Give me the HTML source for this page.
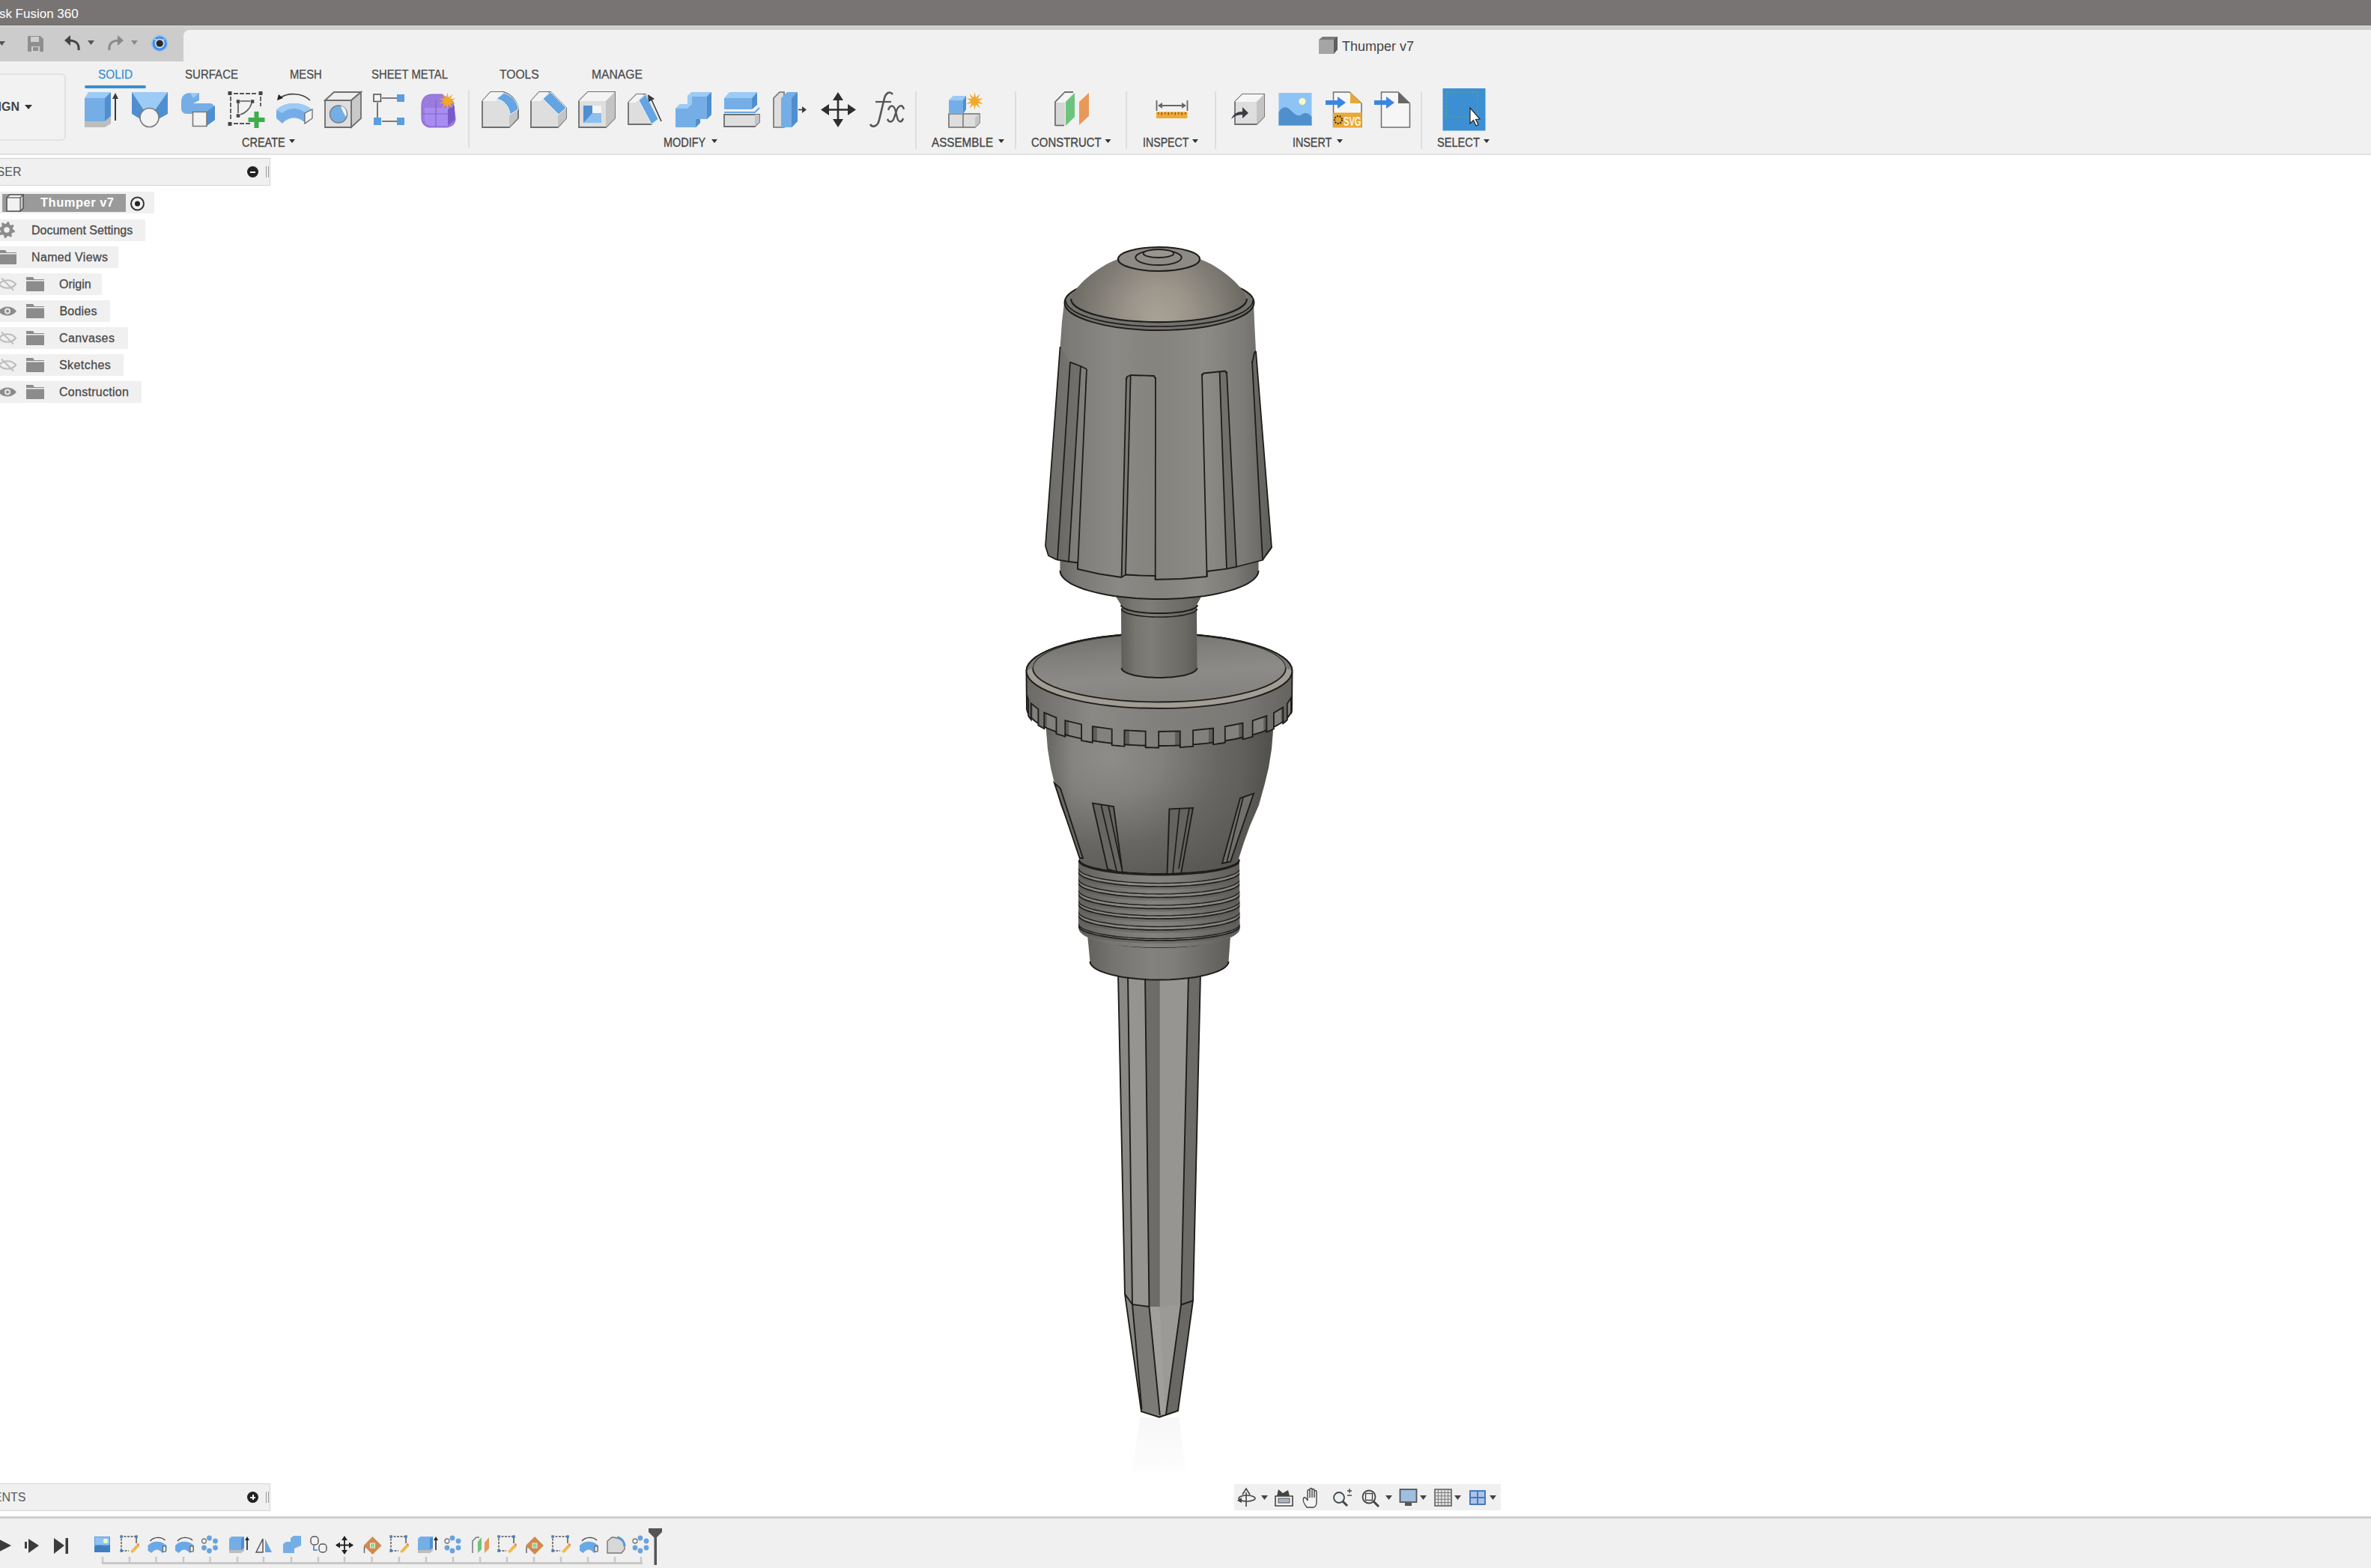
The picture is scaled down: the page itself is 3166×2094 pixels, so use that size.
<!DOCTYPE html>
<html><head><meta charset="utf-8">
<style>
html,body{margin:0;padding:0;width:3166px;height:2094px;overflow:hidden;background:#fff;font-family:"Liberation Sans",sans-serif;}
.a{position:absolute;}
#title{left:0;top:0;width:3166px;height:33px;background:#787473;border-bottom:1px solid #6e6e6e;}
#title span{position:absolute;left:-56px;top:6px;font-size:18px;color:#fff;white-space:nowrap;}
#strip{left:0;top:34px;width:3166px;height:6px;background:#cfcfcf;border-top:1px solid #d9d9d9;box-sizing:border-box;}
#tb{left:0;top:40px;width:3166px;height:165px;background:#f1f1f1;border-bottom:2px solid #e2e2e2;}
#qa{left:0;top:36px;width:245px;height:46px;background:#cccccc;border-radius:0 0 0 0;}
#qa2{left:245px;top:34px;width:20px;height:10px;background:#cfcfcf;}
.tab{position:absolute;top:91px;transform-origin:0 0;font-size:16px;color:#4a4a4a;letter-spacing:0px;white-space:nowrap;-webkit-text-stroke:0.25px #4a4a4a;}
.lbl{position:absolute;top:182px;font-size:16px;color:#444;white-space:nowrap;transform-origin:0 0;-webkit-text-stroke:0.3px #444;}
.sep{position:absolute;width:2px;background:#dedede;}
.row{position:absolute;left:0;height:29px;background:#f0f0f0;}
.rt{position:absolute;font-size:16px;color:#4a4a4a;white-space:nowrap;top:6px;-webkit-text-stroke:0.3px #4a4a4a;}
</style></head><body>
<div id="title" class="a"><span style="font-size:17px;left:-55px;top:8.5px">Autodesk Fusion 360</span></div>
<div id="strip" class="a"></div>
<div id="tb" class="a"></div>
<div id="qa" class="a"></div>
<div class="a" style="left:245px;top:40px;width:8px;height:8px;background:#cdcdcd"></div><div class="a" style="left:245px;top:40px;width:8px;height:8px;background:#f1f1f1;border-top-left-radius:8px"></div>

<!-- tabs -->
<div class="tab" style="left:131px;color:#3a8fd6;-webkit-text-stroke:0.25px #3a8fd6;transform:scaleX(0.96)">SOLID</div>
<div class="a" style="left:113px;top:114px;width:82px;height:4px;background:#3a8fd0;border-radius:2px"></div>
<div class="tab" style="left:246.5px;transform:scaleX(0.94)">SURFACE</div>
<div class="tab" style="left:386.5px;transform:scaleX(0.925)">MESH</div>
<div class="tab" style="left:495.5px;transform:scaleX(0.93)">SHEET METAL</div>
<div class="tab" style="left:666.5px;transform:scaleX(0.975)">TOOLS</div>
<div class="tab" style="left:790px;transform:scaleX(0.98)">MANAGE</div>

<!-- design button -->
<div class="a" style="left:-10px;top:98px;width:98px;height:90px;border:2px solid #e2e2e2;border-radius:6px;box-sizing:border-box;background:#f2f2f2"></div>
<div class="a" style="left:-2.5px;top:134px;font-size:16px;font-weight:bold;color:#444">IGN</div>

<!-- labels -->
<div class="lbl" style="left:323px;transform:scaleX(0.906)">CREATE</div>
<div class="lbl" style="left:886px;transform:scaleX(0.902)">MODIFY</div>
<div class="lbl" style="left:1244px;transform:scaleX(0.951)">ASSEMBLE</div>
<div class="lbl" style="left:1377px;transform:scaleX(0.933)">CONSTRUCT</div>
<div class="lbl" style="left:1526px;transform:scaleX(0.887)">INSPECT</div>
<div class="lbl" style="left:1726px;transform:scaleX(0.895)">INSERT</div>
<div class="lbl" style="left:1919px;transform:scaleX(0.913)">SELECT</div>

<div class="sep" style="left:625px;top:121px;height:76px"></div>
<div class="sep" style="left:1222px;top:122px;height:77px"></div>
<div class="sep" style="left:1355px;top:122px;height:77px"></div>
<div class="sep" style="left:1503px;top:122px;height:77px"></div>
<div class="sep" style="left:1622px;top:122px;height:77px"></div>
<div class="sep" style="left:1897px;top:122px;height:77px"></div>

<!-- doc title -->
<div class="a" style="left:1792px;top:51.5px;font-size:18px;color:#444">Thumper v7</div>

<!-- browser -->
<div class="a" style="left:-2px;top:211px;width:363px;height:37px;background:#f0f0f0;border:1px solid #d4d4d4;box-sizing:border-box"></div>
<div class="a" style="left:-4.4px;top:221.3px;font-size:16px;color:#555">SER</div>
<div class="a" style="left:330px;top:222px;width:15px;height:15px;border-radius:50%;background:#222"></div>
<div class="a" style="left:334px;top:229px;width:7px;height:2px;background:#fff"></div>
<div class="a" style="left:355px;top:222px;width:1px;height:15px;background:#999"></div>
<div class="a" style="left:358px;top:222px;width:1px;height:15px;background:#999"></div>

<div class="row" style="top:256px;width:206px"></div>
<div class="a" style="left:3px;top:259px;width:165px;height:24px;background:#9a9a9a"></div>
<div class="a" style="left:54px;top:261px;font-size:16.5px;font-weight:bold;color:#fff;letter-spacing:0.5px">Thumper v7</div>

<div class="row" style="top:293px;width:194px"><span class="rt" style="left:42px">Document Settings</span></div>
<div class="row" style="top:329px;width:158px"><span class="rt" style="left:42px;letter-spacing:0.35px">Named Views</span></div>
<div class="row" style="top:365px;width:136px"><span class="rt" style="left:79px">Origin</span></div>
<div class="row" style="top:401px;width:147px"><span class="rt" style="left:79.4px;letter-spacing:0.24px">Bodies</span></div>
<div class="row" style="top:437px;width:171px"><span class="rt" style="left:79px;letter-spacing:0.39px">Canvases</span></div>
<div class="row" style="top:473px;width:165px"><span class="rt" style="left:79px;letter-spacing:0.43px">Sketches</span></div>
<div class="row" style="top:509px;width:189px"><span class="rt" style="left:79px;letter-spacing:0.27px">Construction</span></div>

<!-- comments -->
<div class="a" style="left:-2px;top:1981px;width:363px;height:37px;background:#f0f0f0;border:1px solid #d4d4d4;box-sizing:border-box"></div>
<div class="a" style="left:-8.3px;top:1991.2px;font-size:16px;color:#5a5a5a">ENTS</div>
<div class="a" style="left:355px;top:1992px;width:1px;height:15px;background:#999"></div>
<div class="a" style="left:358px;top:1992px;width:1px;height:15px;background:#999"></div>
<div class="a" style="left:330px;top:1992px;width:15px;height:15px;border-radius:50%;background:#222"></div>
<div class="a" style="left:334px;top:1999px;width:7px;height:2px;background:#fff"></div>
<div class="a" style="left:336.5px;top:1996px;width:2px;height:7px;background:#fff"></div>

<!-- timeline -->
<div class="a" style="left:0;top:2025px;width:3166px;height:69px;background:#f0f0f0;border-top:3px solid #cfcfcf;box-sizing:border-box"></div>

<!-- navbar -->
<div class="a" style="left:1648px;top:1982px;width:356px;height:35px;background:#f0f0f0"></div>

<svg class="a" style="left:0;top:0" width="3166" height="2094" viewBox="0 0 3166 2094"><defs><linearGradient id="gCyl" x1="0" y1="0" x2="1" y2="0"><stop offset="0" stop-color="#5f5e5a"/><stop offset="0.12" stop-color="#7a7975"/><stop offset="0.35" stop-color="#8f8e8a"/><stop offset="0.55" stop-color="#84837f"/><stop offset="0.75" stop-color="#8c8b87"/><stop offset="0.9" stop-color="#777672"/><stop offset="1" stop-color="#5e5d59"/></linearGradient><linearGradient id="gKnob" x1="0" y1="0" x2="1" y2="0"><stop offset="0" stop-color="#6a6965"/><stop offset="0.1" stop-color="#7b7a76"/><stop offset="0.3" stop-color="#8a8985"/><stop offset="0.5" stop-color="#85837e"/><stop offset="0.7" stop-color="#8d8b86"/><stop offset="0.88" stop-color="#7b7a76"/><stop offset="1" stop-color="#62615d"/></linearGradient><linearGradient id="gDome" x1="0" y1="0" x2="1" y2="0"><stop offset="0" stop-color="#6d6b67"/><stop offset="0.2" stop-color="#84807a"/><stop offset="0.45" stop-color="#a29c92"/><stop offset="0.6" stop-color="#9d978d"/><stop offset="0.85" stop-color="#7d7a74"/><stop offset="1" stop-color="#64625e"/></linearGradient><linearGradient id="gCup" x1="0" y1="0" x2="1" y2="1"><stop offset="0" stop-color="#7d7c78"/><stop offset="0.25" stop-color="#8a8985"/><stop offset="0.5" stop-color="#6f6e6a"/><stop offset="0.75" stop-color="#5f5e5a"/><stop offset="1" stop-color="#6a6965"/></linearGradient><linearGradient id="gCupV" x1="0" y1="0" x2="0" y2="1"><stop offset="0" stop-color="#8a8985"/><stop offset="0.35" stop-color="#7c7b77"/><stop offset="0.7" stop-color="#62615d"/><stop offset="1" stop-color="#5a5955"/></linearGradient><linearGradient id="gThread" x1="0" y1="0" x2="1" y2="0"><stop offset="0" stop-color="#62615d"/><stop offset="0.2" stop-color="#767571"/><stop offset="0.45" stop-color="#83827e"/><stop offset="0.6" stop-color="#7f7e7a"/><stop offset="0.8" stop-color="#6e6d69"/><stop offset="1" stop-color="#5e5d59"/></linearGradient><linearGradient id="gDisc" x1="0" y1="0" x2="0" y2="1"><stop offset="0" stop-color="#5a5955"/><stop offset="0.3" stop-color="#73726e"/><stop offset="0.6" stop-color="#7f7e7a"/><stop offset="1" stop-color="#8b8a86"/></linearGradient><linearGradient id="gDiscSide" x1="0" y1="0" x2="1" y2="0"><stop offset="0" stop-color="#6b6a66"/><stop offset="0.25" stop-color="#8a8985"/><stop offset="0.5" stop-color="#81807c"/><stop offset="0.8" stop-color="#7a7975"/><stop offset="1" stop-color="#64635f"/></linearGradient><linearGradient id="gNeck" x1="0" y1="0" x2="1" y2="0"><stop offset="0" stop-color="#5f5e5a"/><stop offset="0.2" stop-color="#77766f"/><stop offset="0.4" stop-color="#7f7d77"/><stop offset="0.6" stop-color="#74736e"/><stop offset="0.85" stop-color="#6a6964"/><stop offset="1" stop-color="#5c5b57"/></linearGradient><linearGradient id="gRefl" x1="0" y1="0" x2="0" y2="1"><stop offset="0" stop-color="#f7f7f7"/><stop offset="1" stop-color="#fdfdfd"/></linearGradient><clipPath id="cThr"><path d="M1440,1149 L1440,1240 L1440.5,1240 L1440.8,1242 L1441.8,1244.1 L1443.5,1246.1 L1445.8,1248 L1448.7,1249.9 L1452.2,1251.8 L1456.3,1253.6 L1461,1255.3 L1466.3,1256.9 L1472,1258.4 L1478.2,1259.8 L1484.8,1261 L1491.8,1262.2 L1499.2,1263.2 L1506.9,1264 L1514.8,1264.7 L1522.9,1265.3 L1531.2,1265.7 L1539.6,1265.9 L1548,1266 L1556.4,1265.9 L1564.8,1265.7 L1573.1,1265.3 L1581.2,1264.7 L1589.1,1264 L1596.8,1263.2 L1604.2,1262.2 L1611.2,1261 L1617.8,1259.8 L1624,1258.4 L1629.7,1256.9 L1635,1255.3 L1639.7,1253.6 L1643.8,1251.8 L1647.3,1249.9 L1650.2,1248 L1652.5,1246.1 L1654.2,1244.1 L1655.2,1242 L1655.5,1240 L1655,1149 Z"/></clipPath><radialGradient id="gCupR" gradientUnits="userSpaceOnUse" cx="1480" cy="1010" r="230" gradientTransform="translate(1480 1010) scale(1 0.8) translate(-1480 -1010)"><stop offset="0" stop-color="#8e8d89"/><stop offset="0.3" stop-color="#82817d"/><stop offset="0.65" stop-color="#676662"/><stop offset="1" stop-color="#585753"/></radialGradient><linearGradient id="gCupEdge" x1="0" y1="0" x2="1" y2="0"><stop offset="0" stop-color="#000000"/><stop offset="0.06" stop-color="#000000"/><stop offset="0.2" stop-color="#000000"/><stop offset="0.8" stop-color="#000000"/><stop offset="1" stop-color="#000000"/></linearGradient><linearGradient id="gCupEdgeL" x1="0" y1="0" x2="1" y2="0"><stop offset="0" stop-color="#3a3936" stop-opacity="0.35"/><stop offset="0.12" stop-color="#3a3936" stop-opacity="0"/><stop offset="0.85" stop-color="#3a3936" stop-opacity="0"/><stop offset="1" stop-color="#3a3936" stop-opacity="0.3"/></linearGradient><linearGradient id="gDiscTop" x1="0" y1="0" x2="0.3" y2="1"><stop offset="0" stop-color="#6b6a66"/><stop offset="0.35" stop-color="#807f7b"/><stop offset="0.7" stop-color="#8c8b87"/><stop offset="1" stop-color="#858480"/></linearGradient><radialGradient id="gDomeR" cx="1548" cy="425" r="150" gradientUnits="userSpaceOnUse" gradientTransform="translate(1548 425) scale(0.9 0.75) translate(-1548 -425)"><stop offset="0" stop-color="#aba498"/><stop offset="0.35" stop-color="#9c968b"/><stop offset="0.7" stop-color="#7e7a73"/><stop offset="1" stop-color="#66635e"/></radialGradient></defs><path d="M1522,1893 L1574,1893 L1584,1965 L1512,1965 Z" fill="url(#gRefl)"/><path d="M1493,1300 L1502,1728 L1524,1885 L1548,1892.5 L1573,1884 L1593,1737 L1603,1300 Z" fill="#898884"/><path d="M1506,1300 L1512,1742 L1534.5,1745 L1529,1300 Z" fill="#959490"/><path d="M1529,1300 L1534.5,1745 L1548.8,1889.8 L1548.8,1300 Z" fill="#6d6c68"/><path d="M1548.8,1300 L1548.8,1889.8 L1577,1742.5 L1587,1300 Z" fill="#969591"/><path d="M1587,1300 L1577,1742.5 L1593,1737 L1603,1300 Z" fill="#6c6b67"/><path d="M1512,1742 L1534.5,1745 L1548.8,1889.8 L1524.6,1884 Z" fill="#7b7a76"/><path d="M1534.5,1745 L1548.8,1745 L1556.8,1889.8 L1548.8,1889.8 Z" fill="#a09f9b"/><path d="M1577,1742.5 L1593,1737 L1573,1884 L1556.8,1889.8 Z" fill="#696864"/><path d="M1548.8,1745 L1577,1742.5 L1556.8,1889.8 Z" fill="#9b9a96"/><path d="M1493,1300 L1502,1728 L1524,1885 L1548,1892.5 L1573,1884 L1593,1737 L1603,1300" fill="none" stroke="#1e1d1b" stroke-width="1.9" stroke-linejoin="round"/><path d="M1506,1300 L1512,1742 L1524.6,1882" fill="none" stroke="#1e1d1b" stroke-width="1.9" stroke-linejoin="round"/><path d="M1529,1300 L1534.5,1745 L1548.8,1889.8" fill="none" stroke="#1e1d1b" stroke-width="1.9" stroke-linejoin="round"/><path d="M1587,1300 L1577,1742.5 L1556.8,1889.8" fill="none" stroke="#1e1d1b" stroke-width="1.9" stroke-linejoin="round"/><path d="M1502,1728 L1512,1742 L1534.5,1745" fill="none" stroke="#1e1d1b" stroke-width="1.9" stroke-linejoin="round"/><path d="M1577,1742.5 L1593,1737" fill="none" stroke="#1e1d1b" stroke-width="1.9" stroke-linejoin="round"/><path d="M1451,1238 L1455.5,1284 L1455.8,1285.9 L1456.6,1287.8 L1458.1,1289.7 L1460,1291.6 L1462.5,1293.4 L1465.6,1295.1 L1469.1,1296.8 L1473.2,1298.4 L1477.7,1299.9 L1482.6,1301.3 L1487.9,1302.6 L1493.6,1303.8 L1499.7,1304.9 L1506,1305.8 L1512.6,1306.6 L1519.4,1307.3 L1526.4,1307.8 L1533.5,1308.2 L1540.7,1308.4 L1548,1308.5 L1555.3,1308.4 L1562.5,1308.2 L1569.6,1307.8 L1576.6,1307.3 L1583.4,1306.6 L1590,1305.8 L1596.3,1304.9 L1602.4,1303.8 L1608.1,1302.6 L1613.4,1301.3 L1618.3,1299.9 L1622.8,1298.4 L1626.9,1296.8 L1630.4,1295.1 L1633.5,1293.4 L1636,1291.6 L1637.9,1289.7 L1639.4,1287.8 L1640.2,1285.9 L1640.5,1284 L1644,1238 Z" fill="url(#gThread)"/><path d="M1455.5,1284 L1455.8,1285.9 L1456.6,1287.8 L1458.1,1289.7 L1460,1291.6 L1462.5,1293.4 L1465.6,1295.1 L1469.1,1296.8 L1473.2,1298.4 L1477.7,1299.9 L1482.6,1301.3 L1487.9,1302.6 L1493.6,1303.8 L1499.7,1304.9 L1506,1305.8 L1512.6,1306.6 L1519.4,1307.3 L1526.4,1307.8 L1533.5,1308.2 L1540.7,1308.4 L1548,1308.5 L1555.3,1308.4 L1562.5,1308.2 L1569.6,1307.8 L1576.6,1307.3 L1583.4,1306.6 L1590,1305.8 L1596.3,1304.9 L1602.4,1303.8 L1608.1,1302.6 L1613.4,1301.3 L1618.3,1299.9 L1622.8,1298.4 L1626.9,1296.8 L1630.4,1295.1 L1633.5,1293.4 L1636,1291.6 L1637.9,1289.7 L1639.4,1287.8 L1640.2,1285.9 L1640.5,1284" fill="none" stroke="#1e1d1b" stroke-width="2.0"/><path d="M1440,1149 L1440,1240 L1440.5,1240 L1440.8,1242 L1441.8,1244.1 L1443.5,1246.1 L1445.8,1248 L1448.7,1249.9 L1452.2,1251.8 L1456.3,1253.6 L1461,1255.3 L1466.3,1256.9 L1472,1258.4 L1478.2,1259.8 L1484.8,1261 L1491.8,1262.2 L1499.2,1263.2 L1506.9,1264 L1514.8,1264.7 L1522.9,1265.3 L1531.2,1265.7 L1539.6,1265.9 L1548,1266 L1556.4,1265.9 L1564.8,1265.7 L1573.1,1265.3 L1581.2,1264.7 L1589.1,1264 L1596.8,1263.2 L1604.2,1262.2 L1611.2,1261 L1617.8,1259.8 L1624,1258.4 L1629.7,1256.9 L1635,1255.3 L1639.7,1253.6 L1643.8,1251.8 L1647.3,1249.9 L1650.2,1248 L1652.5,1246.1 L1654.2,1244.1 L1655.2,1242 L1655.5,1240 L1655,1149 Z" fill="url(#gThread)"/><g clip-path="url(#cThr)"><path d="M1440,1159.6 L1440.3,1161.2 L1441.3,1162.7 L1443,1164.3 L1445.3,1165.8 L1448.2,1167.3 L1451.8,1168.7 L1455.9,1170 L1460.6,1171.4 L1465.9,1172.6 L1471.6,1173.7 L1477.9,1174.8 L1484.5,1175.8 L1491.6,1176.7 L1499,1177.4 L1506.7,1178.1 L1514.6,1178.6 L1522.8,1179 L1531.1,1179.4 L1539.5,1179.5 L1548,1179.6 L1556.5,1179.5 L1564.9,1179.4 L1573.2,1179 L1581.4,1178.6 L1589.3,1178.1 L1597,1177.4 L1604.4,1176.7 L1611.5,1175.8 L1618.1,1174.8 L1624.4,1173.7 L1630.1,1172.6 L1635.4,1171.4 L1640.1,1170 L1644.2,1168.7 L1647.8,1167.3 L1650.7,1165.8 L1653,1164.3 L1654.7,1162.7 L1655.7,1161.2 L1656,1159.6 L1656,1164 L1655.7,1165.6 L1654.7,1167.1 L1653,1168.7 L1650.7,1170.2 L1647.8,1171.7 L1644.2,1173.1 L1640.1,1174.4 L1635.4,1175.8 L1630.1,1177 L1624.4,1178.1 L1618.1,1179.2 L1611.5,1180.2 L1604.4,1181.1 L1597,1181.8 L1589.3,1182.5 L1581.4,1183 L1573.2,1183.4 L1564.9,1183.8 L1556.5,1183.9 L1548,1184 L1539.5,1183.9 L1531.1,1183.8 L1522.8,1183.4 L1514.6,1183 L1506.7,1182.5 L1499,1181.8 L1491.6,1181.1 L1484.5,1180.2 L1477.9,1179.2 L1471.6,1178.1 L1465.9,1177 L1460.6,1175.8 L1455.9,1174.4 L1451.8,1173.1 L1448.2,1171.7 L1445.3,1170.2 L1443,1168.7 L1441.3,1167.1 L1440.3,1165.6 L1440,1164 Z" fill="#8e8d89" opacity="0.8"/><path d="M1440,1164 L1440.3,1165.6 L1441.3,1167.1 L1443,1168.7 L1445.3,1170.2 L1448.2,1171.7 L1451.8,1173.1 L1455.9,1174.4 L1460.6,1175.8 L1465.9,1177 L1471.6,1178.1 L1477.9,1179.2 L1484.5,1180.2 L1491.6,1181.1 L1499,1181.8 L1506.7,1182.5 L1514.6,1183 L1522.8,1183.4 L1531.1,1183.8 L1539.5,1183.9 L1548,1184 L1556.5,1183.9 L1564.9,1183.8 L1573.2,1183.4 L1581.4,1183 L1589.3,1182.5 L1597,1181.8 L1604.4,1181.1 L1611.5,1180.2 L1618.1,1179.2 L1624.4,1178.1 L1630.1,1177 L1635.4,1175.8 L1640.1,1174.4 L1644.2,1173.1 L1647.8,1171.7 L1650.7,1170.2 L1653,1168.7 L1654.7,1167.1 L1655.7,1165.6 L1656,1164 L1656,1168 L1655.7,1169.6 L1654.7,1171.1 L1653,1172.7 L1650.7,1174.2 L1647.8,1175.7 L1644.2,1177.1 L1640.1,1178.4 L1635.4,1179.8 L1630.1,1181 L1624.4,1182.1 L1618.1,1183.2 L1611.5,1184.2 L1604.4,1185.1 L1597,1185.8 L1589.3,1186.5 L1581.4,1187 L1573.2,1187.4 L1564.9,1187.8 L1556.5,1187.9 L1548,1188 L1539.5,1187.9 L1531.1,1187.8 L1522.8,1187.4 L1514.6,1187 L1506.7,1186.5 L1499,1185.8 L1491.6,1185.1 L1484.5,1184.2 L1477.9,1183.2 L1471.6,1182.1 L1465.9,1181 L1460.6,1179.8 L1455.9,1178.4 L1451.8,1177.1 L1448.2,1175.7 L1445.3,1174.2 L1443,1172.7 L1441.3,1171.1 L1440.3,1169.6 L1440,1168 Z" fill="#5a5955" opacity="0.45"/><path d="M1440,1174 L1440.3,1175.6 L1441.3,1177.1 L1443,1178.7 L1445.3,1180.2 L1448.2,1181.7 L1451.8,1183.1 L1455.9,1184.4 L1460.6,1185.8 L1465.9,1187 L1471.6,1188.1 L1477.9,1189.2 L1484.5,1190.2 L1491.6,1191.1 L1499,1191.8 L1506.7,1192.5 L1514.6,1193 L1522.8,1193.4 L1531.1,1193.8 L1539.5,1193.9 L1548,1194 L1556.5,1193.9 L1564.9,1193.8 L1573.2,1193.4 L1581.4,1193 L1589.3,1192.5 L1597,1191.8 L1604.4,1191.1 L1611.5,1190.2 L1618.1,1189.2 L1624.4,1188.1 L1630.1,1187 L1635.4,1185.8 L1640.1,1184.4 L1644.2,1183.1 L1647.8,1181.7 L1650.7,1180.2 L1653,1178.7 L1654.7,1177.1 L1655.7,1175.6 L1656,1174 L1656,1178.5 L1655.7,1180.1 L1654.7,1181.6 L1653,1183.2 L1650.7,1184.7 L1647.8,1186.2 L1644.2,1187.6 L1640.1,1188.9 L1635.4,1190.3 L1630.1,1191.5 L1624.4,1192.6 L1618.1,1193.7 L1611.5,1194.7 L1604.4,1195.6 L1597,1196.3 L1589.3,1197 L1581.4,1197.5 L1573.2,1197.9 L1564.9,1198.3 L1556.5,1198.4 L1548,1198.5 L1539.5,1198.4 L1531.1,1198.3 L1522.8,1197.9 L1514.6,1197.5 L1506.7,1197 L1499,1196.3 L1491.6,1195.6 L1484.5,1194.7 L1477.9,1193.7 L1471.6,1192.6 L1465.9,1191.5 L1460.6,1190.3 L1455.9,1188.9 L1451.8,1187.6 L1448.2,1186.2 L1445.3,1184.7 L1443,1183.2 L1441.3,1181.6 L1440.3,1180.1 L1440,1178.5 Z" fill="#8e8d89" opacity="0.8"/><path d="M1440,1178.5 L1440.3,1180.1 L1441.3,1181.6 L1443,1183.2 L1445.3,1184.7 L1448.2,1186.2 L1451.8,1187.6 L1455.9,1188.9 L1460.6,1190.3 L1465.9,1191.5 L1471.6,1192.6 L1477.9,1193.7 L1484.5,1194.7 L1491.6,1195.6 L1499,1196.3 L1506.7,1197 L1514.6,1197.5 L1522.8,1197.9 L1531.1,1198.3 L1539.5,1198.4 L1548,1198.5 L1556.5,1198.4 L1564.9,1198.3 L1573.2,1197.9 L1581.4,1197.5 L1589.3,1197 L1597,1196.3 L1604.4,1195.6 L1611.5,1194.7 L1618.1,1193.7 L1624.4,1192.6 L1630.1,1191.5 L1635.4,1190.3 L1640.1,1188.9 L1644.2,1187.6 L1647.8,1186.2 L1650.7,1184.7 L1653,1183.2 L1654.7,1181.6 L1655.7,1180.1 L1656,1178.5 L1656,1182.5 L1655.7,1184.1 L1654.7,1185.6 L1653,1187.2 L1650.7,1188.7 L1647.8,1190.2 L1644.2,1191.6 L1640.1,1192.9 L1635.4,1194.3 L1630.1,1195.5 L1624.4,1196.6 L1618.1,1197.7 L1611.5,1198.7 L1604.4,1199.6 L1597,1200.3 L1589.3,1201 L1581.4,1201.5 L1573.2,1201.9 L1564.9,1202.3 L1556.5,1202.4 L1548,1202.5 L1539.5,1202.4 L1531.1,1202.3 L1522.8,1201.9 L1514.6,1201.5 L1506.7,1201 L1499,1200.3 L1491.6,1199.6 L1484.5,1198.7 L1477.9,1197.7 L1471.6,1196.6 L1465.9,1195.5 L1460.6,1194.3 L1455.9,1192.9 L1451.8,1191.6 L1448.2,1190.2 L1445.3,1188.7 L1443,1187.2 L1441.3,1185.6 L1440.3,1184.1 L1440,1182.5 Z" fill="#5a5955" opacity="0.45"/><path d="M1440,1189 L1440.3,1190.6 L1441.3,1192.1 L1443,1193.7 L1445.3,1195.2 L1448.2,1196.7 L1451.8,1198.1 L1455.9,1199.4 L1460.6,1200.8 L1465.9,1202 L1471.6,1203.1 L1477.9,1204.2 L1484.5,1205.2 L1491.6,1206.1 L1499,1206.8 L1506.7,1207.5 L1514.6,1208 L1522.8,1208.4 L1531.1,1208.8 L1539.5,1208.9 L1548,1209 L1556.5,1208.9 L1564.9,1208.8 L1573.2,1208.4 L1581.4,1208 L1589.3,1207.5 L1597,1206.8 L1604.4,1206.1 L1611.5,1205.2 L1618.1,1204.2 L1624.4,1203.1 L1630.1,1202 L1635.4,1200.8 L1640.1,1199.4 L1644.2,1198.1 L1647.8,1196.7 L1650.7,1195.2 L1653,1193.7 L1654.7,1192.1 L1655.7,1190.6 L1656,1189 L1656,1193.5 L1655.7,1195.1 L1654.7,1196.6 L1653,1198.2 L1650.7,1199.7 L1647.8,1201.2 L1644.2,1202.6 L1640.1,1203.9 L1635.4,1205.3 L1630.1,1206.5 L1624.4,1207.6 L1618.1,1208.7 L1611.5,1209.7 L1604.4,1210.6 L1597,1211.3 L1589.3,1212 L1581.4,1212.5 L1573.2,1212.9 L1564.9,1213.3 L1556.5,1213.4 L1548,1213.5 L1539.5,1213.4 L1531.1,1213.3 L1522.8,1212.9 L1514.6,1212.5 L1506.7,1212 L1499,1211.3 L1491.6,1210.6 L1484.5,1209.7 L1477.9,1208.7 L1471.6,1207.6 L1465.9,1206.5 L1460.6,1205.3 L1455.9,1203.9 L1451.8,1202.6 L1448.2,1201.2 L1445.3,1199.7 L1443,1198.2 L1441.3,1196.6 L1440.3,1195.1 L1440,1193.5 Z" fill="#8e8d89" opacity="0.8"/><path d="M1440,1193.5 L1440.3,1195.1 L1441.3,1196.6 L1443,1198.2 L1445.3,1199.7 L1448.2,1201.2 L1451.8,1202.6 L1455.9,1203.9 L1460.6,1205.3 L1465.9,1206.5 L1471.6,1207.6 L1477.9,1208.7 L1484.5,1209.7 L1491.6,1210.6 L1499,1211.3 L1506.7,1212 L1514.6,1212.5 L1522.8,1212.9 L1531.1,1213.3 L1539.5,1213.4 L1548,1213.5 L1556.5,1213.4 L1564.9,1213.3 L1573.2,1212.9 L1581.4,1212.5 L1589.3,1212 L1597,1211.3 L1604.4,1210.6 L1611.5,1209.7 L1618.1,1208.7 L1624.4,1207.6 L1630.1,1206.5 L1635.4,1205.3 L1640.1,1203.9 L1644.2,1202.6 L1647.8,1201.2 L1650.7,1199.7 L1653,1198.2 L1654.7,1196.6 L1655.7,1195.1 L1656,1193.5 L1656,1197.5 L1655.7,1199.1 L1654.7,1200.6 L1653,1202.2 L1650.7,1203.7 L1647.8,1205.2 L1644.2,1206.6 L1640.1,1207.9 L1635.4,1209.3 L1630.1,1210.5 L1624.4,1211.6 L1618.1,1212.7 L1611.5,1213.7 L1604.4,1214.6 L1597,1215.3 L1589.3,1216 L1581.4,1216.5 L1573.2,1216.9 L1564.9,1217.3 L1556.5,1217.4 L1548,1217.5 L1539.5,1217.4 L1531.1,1217.3 L1522.8,1216.9 L1514.6,1216.5 L1506.7,1216 L1499,1215.3 L1491.6,1214.6 L1484.5,1213.7 L1477.9,1212.7 L1471.6,1211.6 L1465.9,1210.5 L1460.6,1209.3 L1455.9,1207.9 L1451.8,1206.6 L1448.2,1205.2 L1445.3,1203.7 L1443,1202.2 L1441.3,1200.6 L1440.3,1199.1 L1440,1197.5 Z" fill="#5a5955" opacity="0.45"/><path d="M1440,1203 L1440.3,1204.6 L1441.3,1206.1 L1443,1207.7 L1445.3,1209.2 L1448.2,1210.7 L1451.8,1212.1 L1455.9,1213.4 L1460.6,1214.8 L1465.9,1216 L1471.6,1217.1 L1477.9,1218.2 L1484.5,1219.2 L1491.6,1220.1 L1499,1220.8 L1506.7,1221.5 L1514.6,1222 L1522.8,1222.4 L1531.1,1222.8 L1539.5,1222.9 L1548,1223 L1556.5,1222.9 L1564.9,1222.8 L1573.2,1222.4 L1581.4,1222 L1589.3,1221.5 L1597,1220.8 L1604.4,1220.1 L1611.5,1219.2 L1618.1,1218.2 L1624.4,1217.1 L1630.1,1216 L1635.4,1214.8 L1640.1,1213.4 L1644.2,1212.1 L1647.8,1210.7 L1650.7,1209.2 L1653,1207.7 L1654.7,1206.1 L1655.7,1204.6 L1656,1203 L1656,1207 L1655.7,1208.6 L1654.7,1210.1 L1653,1211.7 L1650.7,1213.2 L1647.8,1214.7 L1644.2,1216.1 L1640.1,1217.4 L1635.4,1218.8 L1630.1,1220 L1624.4,1221.1 L1618.1,1222.2 L1611.5,1223.2 L1604.4,1224.1 L1597,1224.8 L1589.3,1225.5 L1581.4,1226 L1573.2,1226.4 L1564.9,1226.8 L1556.5,1226.9 L1548,1227 L1539.5,1226.9 L1531.1,1226.8 L1522.8,1226.4 L1514.6,1226 L1506.7,1225.5 L1499,1224.8 L1491.6,1224.1 L1484.5,1223.2 L1477.9,1222.2 L1471.6,1221.1 L1465.9,1220 L1460.6,1218.8 L1455.9,1217.4 L1451.8,1216.1 L1448.2,1214.7 L1445.3,1213.2 L1443,1211.7 L1441.3,1210.1 L1440.3,1208.6 L1440,1207 Z" fill="#8e8d89" opacity="0.8"/><path d="M1440,1207 L1440.3,1208.6 L1441.3,1210.1 L1443,1211.7 L1445.3,1213.2 L1448.2,1214.7 L1451.8,1216.1 L1455.9,1217.4 L1460.6,1218.8 L1465.9,1220 L1471.6,1221.1 L1477.9,1222.2 L1484.5,1223.2 L1491.6,1224.1 L1499,1224.8 L1506.7,1225.5 L1514.6,1226 L1522.8,1226.4 L1531.1,1226.8 L1539.5,1226.9 L1548,1227 L1556.5,1226.9 L1564.9,1226.8 L1573.2,1226.4 L1581.4,1226 L1589.3,1225.5 L1597,1224.8 L1604.4,1224.1 L1611.5,1223.2 L1618.1,1222.2 L1624.4,1221.1 L1630.1,1220 L1635.4,1218.8 L1640.1,1217.4 L1644.2,1216.1 L1647.8,1214.7 L1650.7,1213.2 L1653,1211.7 L1654.7,1210.1 L1655.7,1208.6 L1656,1207 L1656,1211 L1655.7,1212.6 L1654.7,1214.1 L1653,1215.7 L1650.7,1217.2 L1647.8,1218.7 L1644.2,1220.1 L1640.1,1221.4 L1635.4,1222.8 L1630.1,1224 L1624.4,1225.1 L1618.1,1226.2 L1611.5,1227.2 L1604.4,1228.1 L1597,1228.8 L1589.3,1229.5 L1581.4,1230 L1573.2,1230.4 L1564.9,1230.8 L1556.5,1230.9 L1548,1231 L1539.5,1230.9 L1531.1,1230.8 L1522.8,1230.4 L1514.6,1230 L1506.7,1229.5 L1499,1228.8 L1491.6,1228.1 L1484.5,1227.2 L1477.9,1226.2 L1471.6,1225.1 L1465.9,1224 L1460.6,1222.8 L1455.9,1221.4 L1451.8,1220.1 L1448.2,1218.7 L1445.3,1217.2 L1443,1215.7 L1441.3,1214.1 L1440.3,1212.6 L1440,1211 Z" fill="#5a5955" opacity="0.45"/><path d="M1440,1217.6 L1440.3,1219.2 L1441.3,1220.7 L1443,1222.3 L1445.3,1223.8 L1448.2,1225.3 L1451.8,1226.7 L1455.9,1228 L1460.6,1229.4 L1465.9,1230.6 L1471.6,1231.7 L1477.9,1232.8 L1484.5,1233.8 L1491.6,1234.7 L1499,1235.4 L1506.7,1236.1 L1514.6,1236.6 L1522.8,1237 L1531.1,1237.4 L1539.5,1237.5 L1548,1237.6 L1556.5,1237.5 L1564.9,1237.4 L1573.2,1237 L1581.4,1236.6 L1589.3,1236.1 L1597,1235.4 L1604.4,1234.7 L1611.5,1233.8 L1618.1,1232.8 L1624.4,1231.7 L1630.1,1230.6 L1635.4,1229.4 L1640.1,1228 L1644.2,1226.7 L1647.8,1225.3 L1650.7,1223.8 L1653,1222.3 L1654.7,1220.7 L1655.7,1219.2 L1656,1217.6 L1656,1222 L1655.7,1223.6 L1654.7,1225.1 L1653,1226.7 L1650.7,1228.2 L1647.8,1229.7 L1644.2,1231.1 L1640.1,1232.4 L1635.4,1233.8 L1630.1,1235 L1624.4,1236.1 L1618.1,1237.2 L1611.5,1238.2 L1604.4,1239.1 L1597,1239.8 L1589.3,1240.5 L1581.4,1241 L1573.2,1241.4 L1564.9,1241.8 L1556.5,1241.9 L1548,1242 L1539.5,1241.9 L1531.1,1241.8 L1522.8,1241.4 L1514.6,1241 L1506.7,1240.5 L1499,1239.8 L1491.6,1239.1 L1484.5,1238.2 L1477.9,1237.2 L1471.6,1236.1 L1465.9,1235 L1460.6,1233.8 L1455.9,1232.4 L1451.8,1231.1 L1448.2,1229.7 L1445.3,1228.2 L1443,1226.7 L1441.3,1225.1 L1440.3,1223.6 L1440,1222 Z" fill="#8e8d89" opacity="0.8"/><path d="M1440,1222 L1440.3,1223.6 L1441.3,1225.1 L1443,1226.7 L1445.3,1228.2 L1448.2,1229.7 L1451.8,1231.1 L1455.9,1232.4 L1460.6,1233.8 L1465.9,1235 L1471.6,1236.1 L1477.9,1237.2 L1484.5,1238.2 L1491.6,1239.1 L1499,1239.8 L1506.7,1240.5 L1514.6,1241 L1522.8,1241.4 L1531.1,1241.8 L1539.5,1241.9 L1548,1242 L1556.5,1241.9 L1564.9,1241.8 L1573.2,1241.4 L1581.4,1241 L1589.3,1240.5 L1597,1239.8 L1604.4,1239.1 L1611.5,1238.2 L1618.1,1237.2 L1624.4,1236.1 L1630.1,1235 L1635.4,1233.8 L1640.1,1232.4 L1644.2,1231.1 L1647.8,1229.7 L1650.7,1228.2 L1653,1226.7 L1654.7,1225.1 L1655.7,1223.6 L1656,1222 L1656,1226 L1655.7,1227.6 L1654.7,1229.1 L1653,1230.7 L1650.7,1232.2 L1647.8,1233.7 L1644.2,1235.1 L1640.1,1236.4 L1635.4,1237.8 L1630.1,1239 L1624.4,1240.1 L1618.1,1241.2 L1611.5,1242.2 L1604.4,1243.1 L1597,1243.8 L1589.3,1244.5 L1581.4,1245 L1573.2,1245.4 L1564.9,1245.8 L1556.5,1245.9 L1548,1246 L1539.5,1245.9 L1531.1,1245.8 L1522.8,1245.4 L1514.6,1245 L1506.7,1244.5 L1499,1243.8 L1491.6,1243.1 L1484.5,1242.2 L1477.9,1241.2 L1471.6,1240.1 L1465.9,1239 L1460.6,1237.8 L1455.9,1236.4 L1451.8,1235.1 L1448.2,1233.7 L1445.3,1232.2 L1443,1230.7 L1441.3,1229.1 L1440.3,1227.6 L1440,1226 Z" fill="#5a5955" opacity="0.45"/><path d="M1440,1233.6 L1440.3,1235.2 L1441.3,1236.7 L1443,1238.3 L1445.3,1239.8 L1448.2,1241.3 L1451.8,1242.7 L1455.9,1244 L1460.6,1245.4 L1465.9,1246.6 L1471.6,1247.7 L1477.9,1248.8 L1484.5,1249.8 L1491.6,1250.7 L1499,1251.4 L1506.7,1252.1 L1514.6,1252.6 L1522.8,1253 L1531.1,1253.4 L1539.5,1253.5 L1548,1253.6 L1556.5,1253.5 L1564.9,1253.4 L1573.2,1253 L1581.4,1252.6 L1589.3,1252.1 L1597,1251.4 L1604.4,1250.7 L1611.5,1249.8 L1618.1,1248.8 L1624.4,1247.7 L1630.1,1246.6 L1635.4,1245.4 L1640.1,1244 L1644.2,1242.7 L1647.8,1241.3 L1650.7,1239.8 L1653,1238.3 L1654.7,1236.7 L1655.7,1235.2 L1656,1233.6 L1656,1236 L1655.7,1237.6 L1654.7,1239.1 L1653,1240.7 L1650.7,1242.2 L1647.8,1243.7 L1644.2,1245.1 L1640.1,1246.4 L1635.4,1247.8 L1630.1,1249 L1624.4,1250.1 L1618.1,1251.2 L1611.5,1252.2 L1604.4,1253.1 L1597,1253.8 L1589.3,1254.5 L1581.4,1255 L1573.2,1255.4 L1564.9,1255.8 L1556.5,1255.9 L1548,1256 L1539.5,1255.9 L1531.1,1255.8 L1522.8,1255.4 L1514.6,1255 L1506.7,1254.5 L1499,1253.8 L1491.6,1253.1 L1484.5,1252.2 L1477.9,1251.2 L1471.6,1250.1 L1465.9,1249 L1460.6,1247.8 L1455.9,1246.4 L1451.8,1245.1 L1448.2,1243.7 L1445.3,1242.2 L1443,1240.7 L1441.3,1239.1 L1440.3,1237.6 L1440,1236 Z" fill="#8e8d89" opacity="0.8"/><path d="M1440,1236 L1440.3,1237.6 L1441.3,1239.1 L1443,1240.7 L1445.3,1242.2 L1448.2,1243.7 L1451.8,1245.1 L1455.9,1246.4 L1460.6,1247.8 L1465.9,1249 L1471.6,1250.1 L1477.9,1251.2 L1484.5,1252.2 L1491.6,1253.1 L1499,1253.8 L1506.7,1254.5 L1514.6,1255 L1522.8,1255.4 L1531.1,1255.8 L1539.5,1255.9 L1548,1256 L1556.5,1255.9 L1564.9,1255.8 L1573.2,1255.4 L1581.4,1255 L1589.3,1254.5 L1597,1253.8 L1604.4,1253.1 L1611.5,1252.2 L1618.1,1251.2 L1624.4,1250.1 L1630.1,1249 L1635.4,1247.8 L1640.1,1246.4 L1644.2,1245.1 L1647.8,1243.7 L1650.7,1242.2 L1653,1240.7 L1654.7,1239.1 L1655.7,1237.6 L1656,1236 L1656,1240 L1655.7,1241.6 L1654.7,1243.1 L1653,1244.7 L1650.7,1246.2 L1647.8,1247.7 L1644.2,1249.1 L1640.1,1250.4 L1635.4,1251.8 L1630.1,1253 L1624.4,1254.1 L1618.1,1255.2 L1611.5,1256.2 L1604.4,1257.1 L1597,1257.8 L1589.3,1258.5 L1581.4,1259 L1573.2,1259.4 L1564.9,1259.8 L1556.5,1259.9 L1548,1260 L1539.5,1259.9 L1531.1,1259.8 L1522.8,1259.4 L1514.6,1259 L1506.7,1258.5 L1499,1257.8 L1491.6,1257.1 L1484.5,1256.2 L1477.9,1255.2 L1471.6,1254.1 L1465.9,1253 L1460.6,1251.8 L1455.9,1250.4 L1451.8,1249.1 L1448.2,1247.7 L1445.3,1246.2 L1443,1244.7 L1441.3,1243.1 L1440.3,1241.6 L1440,1240 Z" fill="#5a5955" opacity="0.45"/><path d="M1440,1148.7 L1440.3,1150.3 L1441.3,1151.8 L1443,1153.4 L1445.3,1154.9 L1448.2,1156.4 L1451.8,1157.8 L1455.9,1159.1 L1460.6,1160.5 L1465.9,1161.7 L1471.6,1162.8 L1477.9,1163.9 L1484.5,1164.9 L1491.6,1165.8 L1499,1166.5 L1506.7,1167.2 L1514.6,1167.7 L1522.8,1168.1 L1531.1,1168.5 L1539.5,1168.6 L1548,1168.7 L1556.5,1168.6 L1564.9,1168.5 L1573.2,1168.1 L1581.4,1167.7 L1589.3,1167.2 L1597,1166.5 L1604.4,1165.8 L1611.5,1164.9 L1618.1,1163.9 L1624.4,1162.8 L1630.1,1161.7 L1635.4,1160.5 L1640.1,1159.1 L1644.2,1157.8 L1647.8,1156.4 L1650.7,1154.9 L1653,1153.4 L1654.7,1151.8 L1655.7,1150.3 L1656,1148.7" fill="none" stroke="#1e1d1b" stroke-width="1.7"/><path d="M1440,1159.6 L1440.3,1161.2 L1441.3,1162.7 L1443,1164.3 L1445.3,1165.8 L1448.2,1167.3 L1451.8,1168.7 L1455.9,1170 L1460.6,1171.4 L1465.9,1172.6 L1471.6,1173.7 L1477.9,1174.8 L1484.5,1175.8 L1491.6,1176.7 L1499,1177.4 L1506.7,1178.1 L1514.6,1178.6 L1522.8,1179 L1531.1,1179.4 L1539.5,1179.5 L1548,1179.6 L1556.5,1179.5 L1564.9,1179.4 L1573.2,1179 L1581.4,1178.6 L1589.3,1178.1 L1597,1177.4 L1604.4,1176.7 L1611.5,1175.8 L1618.1,1174.8 L1624.4,1173.7 L1630.1,1172.6 L1635.4,1171.4 L1640.1,1170 L1644.2,1168.7 L1647.8,1167.3 L1650.7,1165.8 L1653,1164.3 L1654.7,1162.7 L1655.7,1161.2 L1656,1159.6" fill="none" stroke="#1e1d1b" stroke-width="1.4"/><path d="M1440,1164 L1440.3,1165.6 L1441.3,1167.1 L1443,1168.7 L1445.3,1170.2 L1448.2,1171.7 L1451.8,1173.1 L1455.9,1174.4 L1460.6,1175.8 L1465.9,1177 L1471.6,1178.1 L1477.9,1179.2 L1484.5,1180.2 L1491.6,1181.1 L1499,1181.8 L1506.7,1182.5 L1514.6,1183 L1522.8,1183.4 L1531.1,1183.8 L1539.5,1183.9 L1548,1184 L1556.5,1183.9 L1564.9,1183.8 L1573.2,1183.4 L1581.4,1183 L1589.3,1182.5 L1597,1181.8 L1604.4,1181.1 L1611.5,1180.2 L1618.1,1179.2 L1624.4,1178.1 L1630.1,1177 L1635.4,1175.8 L1640.1,1174.4 L1644.2,1173.1 L1647.8,1171.7 L1650.7,1170.2 L1653,1168.7 L1654.7,1167.1 L1655.7,1165.6 L1656,1164" fill="none" stroke="#1e1d1b" stroke-width="1.7"/><path d="M1440,1174 L1440.3,1175.6 L1441.3,1177.1 L1443,1178.7 L1445.3,1180.2 L1448.2,1181.7 L1451.8,1183.1 L1455.9,1184.4 L1460.6,1185.8 L1465.9,1187 L1471.6,1188.1 L1477.9,1189.2 L1484.5,1190.2 L1491.6,1191.1 L1499,1191.8 L1506.7,1192.5 L1514.6,1193 L1522.8,1193.4 L1531.1,1193.8 L1539.5,1193.9 L1548,1194 L1556.5,1193.9 L1564.9,1193.8 L1573.2,1193.4 L1581.4,1193 L1589.3,1192.5 L1597,1191.8 L1604.4,1191.1 L1611.5,1190.2 L1618.1,1189.2 L1624.4,1188.1 L1630.1,1187 L1635.4,1185.8 L1640.1,1184.4 L1644.2,1183.1 L1647.8,1181.7 L1650.7,1180.2 L1653,1178.7 L1654.7,1177.1 L1655.7,1175.6 L1656,1174" fill="none" stroke="#1e1d1b" stroke-width="1.4"/><path d="M1440,1178.5 L1440.3,1180.1 L1441.3,1181.6 L1443,1183.2 L1445.3,1184.7 L1448.2,1186.2 L1451.8,1187.6 L1455.9,1188.9 L1460.6,1190.3 L1465.9,1191.5 L1471.6,1192.6 L1477.9,1193.7 L1484.5,1194.7 L1491.6,1195.6 L1499,1196.3 L1506.7,1197 L1514.6,1197.5 L1522.8,1197.9 L1531.1,1198.3 L1539.5,1198.4 L1548,1198.5 L1556.5,1198.4 L1564.9,1198.3 L1573.2,1197.9 L1581.4,1197.5 L1589.3,1197 L1597,1196.3 L1604.4,1195.6 L1611.5,1194.7 L1618.1,1193.7 L1624.4,1192.6 L1630.1,1191.5 L1635.4,1190.3 L1640.1,1188.9 L1644.2,1187.6 L1647.8,1186.2 L1650.7,1184.7 L1653,1183.2 L1654.7,1181.6 L1655.7,1180.1 L1656,1178.5" fill="none" stroke="#1e1d1b" stroke-width="1.7"/><path d="M1440,1189 L1440.3,1190.6 L1441.3,1192.1 L1443,1193.7 L1445.3,1195.2 L1448.2,1196.7 L1451.8,1198.1 L1455.9,1199.4 L1460.6,1200.8 L1465.9,1202 L1471.6,1203.1 L1477.9,1204.2 L1484.5,1205.2 L1491.6,1206.1 L1499,1206.8 L1506.7,1207.5 L1514.6,1208 L1522.8,1208.4 L1531.1,1208.8 L1539.5,1208.9 L1548,1209 L1556.5,1208.9 L1564.9,1208.8 L1573.2,1208.4 L1581.4,1208 L1589.3,1207.5 L1597,1206.8 L1604.4,1206.1 L1611.5,1205.2 L1618.1,1204.2 L1624.4,1203.1 L1630.1,1202 L1635.4,1200.8 L1640.1,1199.4 L1644.2,1198.1 L1647.8,1196.7 L1650.7,1195.2 L1653,1193.7 L1654.7,1192.1 L1655.7,1190.6 L1656,1189" fill="none" stroke="#1e1d1b" stroke-width="1.4"/><path d="M1440,1193.5 L1440.3,1195.1 L1441.3,1196.6 L1443,1198.2 L1445.3,1199.7 L1448.2,1201.2 L1451.8,1202.6 L1455.9,1203.9 L1460.6,1205.3 L1465.9,1206.5 L1471.6,1207.6 L1477.9,1208.7 L1484.5,1209.7 L1491.6,1210.6 L1499,1211.3 L1506.7,1212 L1514.6,1212.5 L1522.8,1212.9 L1531.1,1213.3 L1539.5,1213.4 L1548,1213.5 L1556.5,1213.4 L1564.9,1213.3 L1573.2,1212.9 L1581.4,1212.5 L1589.3,1212 L1597,1211.3 L1604.4,1210.6 L1611.5,1209.7 L1618.1,1208.7 L1624.4,1207.6 L1630.1,1206.5 L1635.4,1205.3 L1640.1,1203.9 L1644.2,1202.6 L1647.8,1201.2 L1650.7,1199.7 L1653,1198.2 L1654.7,1196.6 L1655.7,1195.1 L1656,1193.5" fill="none" stroke="#1e1d1b" stroke-width="1.7"/><path d="M1440,1203 L1440.3,1204.6 L1441.3,1206.1 L1443,1207.7 L1445.3,1209.2 L1448.2,1210.7 L1451.8,1212.1 L1455.9,1213.4 L1460.6,1214.8 L1465.9,1216 L1471.6,1217.1 L1477.9,1218.2 L1484.5,1219.2 L1491.6,1220.1 L1499,1220.8 L1506.7,1221.5 L1514.6,1222 L1522.8,1222.4 L1531.1,1222.8 L1539.5,1222.9 L1548,1223 L1556.5,1222.9 L1564.9,1222.8 L1573.2,1222.4 L1581.4,1222 L1589.3,1221.5 L1597,1220.8 L1604.4,1220.1 L1611.5,1219.2 L1618.1,1218.2 L1624.4,1217.1 L1630.1,1216 L1635.4,1214.8 L1640.1,1213.4 L1644.2,1212.1 L1647.8,1210.7 L1650.7,1209.2 L1653,1207.7 L1654.7,1206.1 L1655.7,1204.6 L1656,1203" fill="none" stroke="#1e1d1b" stroke-width="1.4"/><path d="M1440,1207 L1440.3,1208.6 L1441.3,1210.1 L1443,1211.7 L1445.3,1213.2 L1448.2,1214.7 L1451.8,1216.1 L1455.9,1217.4 L1460.6,1218.8 L1465.9,1220 L1471.6,1221.1 L1477.9,1222.2 L1484.5,1223.2 L1491.6,1224.1 L1499,1224.8 L1506.7,1225.5 L1514.6,1226 L1522.8,1226.4 L1531.1,1226.8 L1539.5,1226.9 L1548,1227 L1556.5,1226.9 L1564.9,1226.8 L1573.2,1226.4 L1581.4,1226 L1589.3,1225.5 L1597,1224.8 L1604.4,1224.1 L1611.5,1223.2 L1618.1,1222.2 L1624.4,1221.1 L1630.1,1220 L1635.4,1218.8 L1640.1,1217.4 L1644.2,1216.1 L1647.8,1214.7 L1650.7,1213.2 L1653,1211.7 L1654.7,1210.1 L1655.7,1208.6 L1656,1207" fill="none" stroke="#1e1d1b" stroke-width="1.7"/><path d="M1440,1217.6 L1440.3,1219.2 L1441.3,1220.7 L1443,1222.3 L1445.3,1223.8 L1448.2,1225.3 L1451.8,1226.7 L1455.9,1228 L1460.6,1229.4 L1465.9,1230.6 L1471.6,1231.7 L1477.9,1232.8 L1484.5,1233.8 L1491.6,1234.7 L1499,1235.4 L1506.7,1236.1 L1514.6,1236.6 L1522.8,1237 L1531.1,1237.4 L1539.5,1237.5 L1548,1237.6 L1556.5,1237.5 L1564.9,1237.4 L1573.2,1237 L1581.4,1236.6 L1589.3,1236.1 L1597,1235.4 L1604.4,1234.7 L1611.5,1233.8 L1618.1,1232.8 L1624.4,1231.7 L1630.1,1230.6 L1635.4,1229.4 L1640.1,1228 L1644.2,1226.7 L1647.8,1225.3 L1650.7,1223.8 L1653,1222.3 L1654.7,1220.7 L1655.7,1219.2 L1656,1217.6" fill="none" stroke="#1e1d1b" stroke-width="1.4"/><path d="M1440,1222 L1440.3,1223.6 L1441.3,1225.1 L1443,1226.7 L1445.3,1228.2 L1448.2,1229.7 L1451.8,1231.1 L1455.9,1232.4 L1460.6,1233.8 L1465.9,1235 L1471.6,1236.1 L1477.9,1237.2 L1484.5,1238.2 L1491.6,1239.1 L1499,1239.8 L1506.7,1240.5 L1514.6,1241 L1522.8,1241.4 L1531.1,1241.8 L1539.5,1241.9 L1548,1242 L1556.5,1241.9 L1564.9,1241.8 L1573.2,1241.4 L1581.4,1241 L1589.3,1240.5 L1597,1239.8 L1604.4,1239.1 L1611.5,1238.2 L1618.1,1237.2 L1624.4,1236.1 L1630.1,1235 L1635.4,1233.8 L1640.1,1232.4 L1644.2,1231.1 L1647.8,1229.7 L1650.7,1228.2 L1653,1226.7 L1654.7,1225.1 L1655.7,1223.6 L1656,1222" fill="none" stroke="#1e1d1b" stroke-width="1.7"/><path d="M1440,1233.6 L1440.3,1235.2 L1441.3,1236.7 L1443,1238.3 L1445.3,1239.8 L1448.2,1241.3 L1451.8,1242.7 L1455.9,1244 L1460.6,1245.4 L1465.9,1246.6 L1471.6,1247.7 L1477.9,1248.8 L1484.5,1249.8 L1491.6,1250.7 L1499,1251.4 L1506.7,1252.1 L1514.6,1252.6 L1522.8,1253 L1531.1,1253.4 L1539.5,1253.5 L1548,1253.6 L1556.5,1253.5 L1564.9,1253.4 L1573.2,1253 L1581.4,1252.6 L1589.3,1252.1 L1597,1251.4 L1604.4,1250.7 L1611.5,1249.8 L1618.1,1248.8 L1624.4,1247.7 L1630.1,1246.6 L1635.4,1245.4 L1640.1,1244 L1644.2,1242.7 L1647.8,1241.3 L1650.7,1239.8 L1653,1238.3 L1654.7,1236.7 L1655.7,1235.2 L1656,1233.6" fill="none" stroke="#1e1d1b" stroke-width="1.4"/><path d="M1440,1236 L1440.3,1237.6 L1441.3,1239.1 L1443,1240.7 L1445.3,1242.2 L1448.2,1243.7 L1451.8,1245.1 L1455.9,1246.4 L1460.6,1247.8 L1465.9,1249 L1471.6,1250.1 L1477.9,1251.2 L1484.5,1252.2 L1491.6,1253.1 L1499,1253.8 L1506.7,1254.5 L1514.6,1255 L1522.8,1255.4 L1531.1,1255.8 L1539.5,1255.9 L1548,1256 L1556.5,1255.9 L1564.9,1255.8 L1573.2,1255.4 L1581.4,1255 L1589.3,1254.5 L1597,1253.8 L1604.4,1253.1 L1611.5,1252.2 L1618.1,1251.2 L1624.4,1250.1 L1630.1,1249 L1635.4,1247.8 L1640.1,1246.4 L1644.2,1245.1 L1647.8,1243.7 L1650.7,1242.2 L1653,1240.7 L1654.7,1239.1 L1655.7,1237.6 L1656,1236" fill="none" stroke="#1e1d1b" stroke-width="1.7"/><path d="M1440,1246 L1440.3,1247.6 L1441.3,1249.1 L1443,1250.7 L1445.3,1252.2 L1448.2,1253.7 L1451.8,1255.1 L1455.9,1256.4 L1460.6,1257.8 L1465.9,1259 L1471.6,1260.1 L1477.9,1261.2 L1484.5,1262.2 L1491.6,1263.1 L1499,1263.8 L1506.7,1264.5 L1514.6,1265 L1522.8,1265.4 L1531.1,1265.8 L1539.5,1265.9 L1548,1266 L1556.5,1265.9 L1564.9,1265.8 L1573.2,1265.4 L1581.4,1265 L1589.3,1264.5 L1597,1263.8 L1604.4,1263.1 L1611.5,1262.2 L1618.1,1261.2 L1624.4,1260.1 L1630.1,1259 L1635.4,1257.8 L1640.1,1256.4 L1644.2,1255.1 L1647.8,1253.7 L1650.7,1252.2 L1653,1250.7 L1654.7,1249.1 L1655.7,1247.6 L1656,1246" fill="none" stroke="#1e1d1b" stroke-width="1.4"/></g><path d="M1395,950 L1397,975 L1399,1000 L1403,1025 L1408,1046 L1416,1075 L1427,1103 L1435,1125 L1441.7,1146 L1441,1148 L1441.3,1149.5 L1442.3,1151 L1444,1152.4 L1446.2,1153.9 L1449.1,1155.3 L1452.7,1156.6 L1456.8,1157.9 L1461.4,1159.2 L1466.6,1160.3 L1472.3,1161.4 L1478.5,1162.4 L1485.1,1163.4 L1492.1,1164.2 L1499.4,1164.9 L1507.1,1165.6 L1514.9,1166.1 L1523,1166.5 L1531.3,1166.8 L1539.6,1166.9 L1548,1167 L1556.4,1166.9 L1564.7,1166.8 L1573,1166.5 L1581.1,1166.1 L1588.9,1165.6 L1596.6,1164.9 L1603.9,1164.2 L1610.9,1163.4 L1617.5,1162.4 L1623.7,1161.4 L1629.4,1160.3 L1634.6,1159.2 L1639.2,1157.9 L1643.3,1156.6 L1646.9,1155.3 L1649.8,1153.9 L1652,1152.4 L1653.7,1151 L1654.7,1149.5 L1655,1148 L1654.3,1146 L1661,1125 L1669,1103 L1681,1075 L1689,1046 L1694,1025 L1698,1000 L1700,975 L1702,950 Z" fill="url(#gCupR)"/><path d="M1395,950 L1397,975 L1399,1000 L1403,1025 L1408,1046 L1416,1075 L1427,1103 L1435,1125 L1441.7,1146 L1441,1148 L1441.3,1149.5 L1442.3,1151 L1444,1152.4 L1446.2,1153.9 L1449.1,1155.3 L1452.7,1156.6 L1456.8,1157.9 L1461.4,1159.2 L1466.6,1160.3 L1472.3,1161.4 L1478.5,1162.4 L1485.1,1163.4 L1492.1,1164.2 L1499.4,1164.9 L1507.1,1165.6 L1514.9,1166.1 L1523,1166.5 L1531.3,1166.8 L1539.6,1166.9 L1548,1167 L1556.4,1166.9 L1564.7,1166.8 L1573,1166.5 L1581.1,1166.1 L1588.9,1165.6 L1596.6,1164.9 L1603.9,1164.2 L1610.9,1163.4 L1617.5,1162.4 L1623.7,1161.4 L1629.4,1160.3 L1634.6,1159.2 L1639.2,1157.9 L1643.3,1156.6 L1646.9,1155.3 L1649.8,1153.9 L1652,1152.4 L1653.7,1151 L1654.7,1149.5 L1655,1148 L1654.3,1146 L1661,1125 L1669,1103 L1681,1075 L1689,1046 L1694,1025 L1698,1000 L1700,975 L1702,950 Z" fill="url(#gCupEdgeL)"/><path d="M1408,1046 L1416,1053 L1446,1146 L1441.7,1146 Z" fill="#6a6965" stroke="#1e1d1b" stroke-width="1.9"/><path d="M1459,1072.6 L1487,1077 L1499,1166.5 L1479,1160.7 Z" fill="#676662" stroke="#1e1d1b" stroke-width="1.9"/><path d="M1561.4,1080.4 L1593,1079 L1577,1166.5 L1558.5,1168 Z" fill="#64635f" stroke="#1e1d1b" stroke-width="1.9"/><path d="M1656,1066 L1674,1059.7 L1643,1150.7 L1632,1152.9 Z" fill="#706f6b" stroke="#1e1d1b" stroke-width="1.9"/><path d="M1470,1074 L1491,1163 M1480,1076 L1498,1160" stroke="#1e1d1b" stroke-width="1.7" fill="none"/><path d="M1575,1080 L1566,1167 M1588,1080 L1574,1160" stroke="#1e1d1b" stroke-width="1.7" fill="none"/><path d="M1660,1065 L1638,1152" stroke="#1e1d1b" stroke-width="1.7" fill="none"/><path d="M1441,1148 L1441.3,1149.5 L1442.3,1151 L1444,1152.4 L1446.2,1153.9 L1449.1,1155.3 L1452.7,1156.6 L1456.8,1157.9 L1461.4,1159.2 L1466.6,1160.3 L1472.3,1161.4 L1478.5,1162.4 L1485.1,1163.4 L1492.1,1164.2 L1499.4,1164.9 L1507.1,1165.6 L1514.9,1166.1 L1523,1166.5 L1531.3,1166.8 L1539.6,1166.9 L1548,1167 L1556.4,1166.9 L1564.7,1166.8 L1573,1166.5 L1581.1,1166.1 L1588.9,1165.6 L1596.6,1164.9 L1603.9,1164.2 L1610.9,1163.4 L1617.5,1162.4 L1623.7,1161.4 L1629.4,1160.3 L1634.6,1159.2 L1639.2,1157.9 L1643.3,1156.6 L1646.9,1155.3 L1649.8,1153.9 L1652,1152.4 L1653.7,1151 L1654.7,1149.5 L1655,1148" fill="none" stroke="#1e1d1b" stroke-width="2.0"/><path d="M1370.5,897 L1371,945.5 L1371.1,947.5 L1371.6,949.5 L1372.2,951.5 L1373.2,953.4 L1373.2,955.9 L1373.9,957.2 L1374.8,958.4 L1375.8,959.6 L1376.8,960.9 L1376.8,958.4 L1378.8,960.3 L1381,962.3 L1383.6,964.2 L1386.4,966.1 L1386.4,968.6 L1388.2,969.7 L1390.2,970.8 L1392.2,972 L1394.3,973.1 L1394.3,970.6 L1398,972.3 L1402,974 L1406.1,975.7 L1410.5,977.3 L1410.5,979.8 L1413.4,980.8 L1416.3,981.7 L1419.2,982.6 L1422.3,983.6 L1422.3,981.1 L1427.5,982.5 L1432.8,983.8 L1438.4,985.1 L1444.1,986.4 L1444.1,988.9 L1447.7,989.6 L1451.3,990.3 L1455.1,991 L1458.8,991.6 L1458.8,989.1 L1465.1,990.1 L1471.5,991 L1478.1,991.9 L1484.7,992.7 L1484.7,995.2 L1488.8,995.6 L1493,996 L1497.2,996.4 L1501.4,996.7 L1501.4,994.2 L1508.4,994.7 L1515.4,995.1 L1522.5,995.5 L1529.7,995.7 L1529.7,998.2 L1534,998.3 L1538.4,998.4 L1542.8,998.5 L1547.2,998.5 L1547.2,996 L1554.4,996 L1561.6,995.9 L1568.7,995.7 L1575.8,995.4 L1575.8,997.9 L1580.2,997.7 L1584.5,997.4 L1588.8,997.1 L1593.1,996.8 L1593.1,994.3 L1600,993.8 L1606.8,993.1 L1613.5,992.4 L1620.1,991.6 L1620.1,994.1 L1624.1,993.6 L1628.1,993 L1632,992.5 L1635.8,991.8 L1635.8,989.3 L1642,988.3 L1648,987.2 L1653.8,986 L1659.5,984.7 L1659.5,987.2 L1662.9,986.4 L1666.2,985.6 L1669.4,984.7 L1672.6,983.9 L1672.6,981.4 L1677.6,979.9 L1682.4,978.4 L1687,976.8 L1691.3,975.1 L1691.3,977.6 L1693.8,976.6 L1696.3,975.6 L1698.6,974.5 L1700.9,973.4 L1700.9,970.9 L1704.4,969.1 L1707.6,967.3 L1710.6,965.5 L1713.3,963.6 L1713.3,966.1 L1714.8,964.9 L1716.2,963.7 L1717.6,962.5 L1718.8,961.3 L1718.8,958.8 L1720.5,956.8 L1722,954.8 L1723.2,952.8 L1724,950.7 L1724,953.2 L1724.4,952 L1724.7,950.7 L1724.9,949.5 L1725,948.2 L1725.5,897 Z" fill="url(#gDiscSide)"/><path d="M1724,950.7 L1724,931.7 L1718.8,939.8 L1718.8,958.8 Z" fill="#82817d"/><path d="M1724,950.7 L1724,931.7 L1723.2,933.7 L1723.2,952.7 Z" fill="#5e5d59"/><path d="M1713.3,963.6 L1713.3,944.6 L1700.9,951.9 L1700.9,970.9 Z" fill="#82817d"/><path d="M1713.3,963.6 L1713.3,944.6 L1710.7,946.4 L1710.7,965.4 Z" fill="#5e5d59"/><path d="M1691.3,975.1 L1691.3,956.1 L1672.6,962.4 L1672.6,981.4 Z" fill="#82817d"/><path d="M1691.3,975.1 L1691.3,956.1 L1687.2,957.7 L1687.2,976.7 Z" fill="#5e5d59"/><path d="M1659.5,984.7 L1659.5,965.7 L1635.8,970.3 L1635.8,989.3 Z" fill="#82817d"/><path d="M1659.5,984.7 L1659.5,965.7 L1654.2,966.9 L1654.2,985.9 Z" fill="#5e5d59"/><path d="M1620.1,991.6 L1620.1,972.6 L1593.1,975.3 L1593.1,994.3 Z" fill="#82817d"/><path d="M1620.1,991.6 L1620.1,972.6 L1613.9,973.4 L1613.9,992.4 Z" fill="#5e5d59"/><path d="M1575.8,995.4 L1575.8,976.4 L1547.2,977 L1547.2,996 Z" fill="#82817d"/><path d="M1575.8,995.4 L1575.8,976.4 L1569.1,976.6 L1569.1,995.6 Z" fill="#5e5d59"/><path d="M1529.7,995.7 L1529.7,976.7 L1501.4,975.2 L1501.4,994.2 Z" fill="#82817d"/><path d="M1501.4,994.2 L1501.4,975.2 L1508,975.7 L1508,994.7 Z" fill="#5e5d59"/><path d="M1484.7,992.7 L1484.7,973.7 L1458.8,970.1 L1458.8,989.1 Z" fill="#82817d"/><path d="M1458.8,989.1 L1458.8,970.1 L1464.8,971.1 L1464.8,990.1 Z" fill="#5e5d59"/><path d="M1444.1,986.4 L1444.1,967.4 L1422.3,962.1 L1422.3,981.1 Z" fill="#82817d"/><path d="M1422.3,981.1 L1422.3,962.1 L1427.2,963.4 L1427.2,982.4 Z" fill="#5e5d59"/><path d="M1410.5,977.3 L1410.5,958.3 L1394.3,951.6 L1394.3,970.6 Z" fill="#82817d"/><path d="M1394.3,970.6 L1394.3,951.6 L1397.8,953.2 L1397.8,972.2 Z" fill="#5e5d59"/><path d="M1386.4,966.1 L1386.4,947.1 L1376.8,939.4 L1376.8,958.4 Z" fill="#82817d"/><path d="M1376.8,958.4 L1376.8,939.4 L1378.7,941.2 L1378.7,960.2 Z" fill="#5e5d59"/><path d="M1373.2,953.4 L1373.2,934.4 L1371.1,928.3 L1371.1,947.3 Z" fill="#82817d"/><path d="M1371.1,947.3 L1371.1,928.3 L1371.5,930.2 L1371.5,949.2 Z" fill="#5e5d59"/><path d="M1724,950.7 L1724,931.7 L1718.8,939.8 L1718.8,958.8" fill="none" stroke="#1e1d1b" stroke-width="1.8"/><path d="M1713.3,963.6 L1713.3,944.6 L1700.9,951.9 L1700.9,970.9" fill="none" stroke="#1e1d1b" stroke-width="1.8"/><path d="M1691.3,975.1 L1691.3,956.1 L1672.6,962.4 L1672.6,981.4" fill="none" stroke="#1e1d1b" stroke-width="1.8"/><path d="M1659.5,984.7 L1659.5,965.7 L1635.8,970.3 L1635.8,989.3" fill="none" stroke="#1e1d1b" stroke-width="1.8"/><path d="M1620.1,991.6 L1620.1,972.6 L1593.1,975.3 L1593.1,994.3" fill="none" stroke="#1e1d1b" stroke-width="1.8"/><path d="M1575.8,995.4 L1575.8,976.4 L1547.2,977 L1547.2,996" fill="none" stroke="#1e1d1b" stroke-width="1.8"/><path d="M1529.7,995.7 L1529.7,976.7 L1501.4,975.2 L1501.4,994.2" fill="none" stroke="#1e1d1b" stroke-width="1.8"/><path d="M1484.7,992.7 L1484.7,973.7 L1458.8,970.1 L1458.8,989.1" fill="none" stroke="#1e1d1b" stroke-width="1.8"/><path d="M1444.1,986.4 L1444.1,967.4 L1422.3,962.1 L1422.3,981.1" fill="none" stroke="#1e1d1b" stroke-width="1.8"/><path d="M1410.5,977.3 L1410.5,958.3 L1394.3,951.6 L1394.3,970.6" fill="none" stroke="#1e1d1b" stroke-width="1.8"/><path d="M1386.4,966.1 L1386.4,947.1 L1376.8,939.4 L1376.8,958.4" fill="none" stroke="#1e1d1b" stroke-width="1.8"/><path d="M1373.2,953.4 L1373.2,934.4 L1371.1,928.3 L1371.1,947.3" fill="none" stroke="#1e1d1b" stroke-width="1.8"/><path d="M1370.5,897 L1371,945.5 L1371.1,947.5 L1371.6,949.5 L1372.2,951.5 L1373.2,953.4 L1373.2,955.9 L1373.9,957.2 L1374.8,958.4 L1375.8,959.6 L1376.8,960.9 L1376.8,958.4 L1378.8,960.3 L1381,962.3 L1383.6,964.2 L1386.4,966.1 L1386.4,968.6 L1388.2,969.7 L1390.2,970.8 L1392.2,972 L1394.3,973.1 L1394.3,970.6 L1398,972.3 L1402,974 L1406.1,975.7 L1410.5,977.3 L1410.5,979.8 L1413.4,980.8 L1416.3,981.7 L1419.2,982.6 L1422.3,983.6 L1422.3,981.1 L1427.5,982.5 L1432.8,983.8 L1438.4,985.1 L1444.1,986.4 L1444.1,988.9 L1447.7,989.6 L1451.3,990.3 L1455.1,991 L1458.8,991.6 L1458.8,989.1 L1465.1,990.1 L1471.5,991 L1478.1,991.9 L1484.7,992.7 L1484.7,995.2 L1488.8,995.6 L1493,996 L1497.2,996.4 L1501.4,996.7 L1501.4,994.2 L1508.4,994.7 L1515.4,995.1 L1522.5,995.5 L1529.7,995.7 L1529.7,998.2 L1534,998.3 L1538.4,998.4 L1542.8,998.5 L1547.2,998.5 L1547.2,996 L1554.4,996 L1561.6,995.9 L1568.7,995.7 L1575.8,995.4 L1575.8,997.9 L1580.2,997.7 L1584.5,997.4 L1588.8,997.1 L1593.1,996.8 L1593.1,994.3 L1600,993.8 L1606.8,993.1 L1613.5,992.4 L1620.1,991.6 L1620.1,994.1 L1624.1,993.6 L1628.1,993 L1632,992.5 L1635.8,991.8 L1635.8,989.3 L1642,988.3 L1648,987.2 L1653.8,986 L1659.5,984.7 L1659.5,987.2 L1662.9,986.4 L1666.2,985.6 L1669.4,984.7 L1672.6,983.9 L1672.6,981.4 L1677.6,979.9 L1682.4,978.4 L1687,976.8 L1691.3,975.1 L1691.3,977.6 L1693.8,976.6 L1696.3,975.6 L1698.6,974.5 L1700.9,973.4 L1700.9,970.9 L1704.4,969.1 L1707.6,967.3 L1710.6,965.5 L1713.3,963.6 L1713.3,966.1 L1714.8,964.9 L1716.2,963.7 L1717.6,962.5 L1718.8,961.3 L1718.8,958.8 L1720.5,956.8 L1722,954.8 L1723.2,952.8 L1724,950.7 L1724,953.2 L1724.4,952 L1724.7,950.7 L1724.9,949.5 L1725,948.2 L1725.5,897" fill="none" stroke="#1e1d1b" stroke-width="1.9"/><ellipse cx="1548" cy="896" rx="177.5" ry="50" fill="#a29d94" stroke="#1e1d1b" stroke-width="2.0"/><ellipse cx="1548" cy="892" rx="169" ry="45.5" fill="url(#gDiscTop)" stroke="#1e1d1b" stroke-width="1.8"/><path d="M1370.5,896 A177.5,50 0 0 1 1725.5,896 L1717,892 A169,45.5 0 0 0 1379,892 Z" fill="#7a7975"/><path d="M1370.5,896 A177.5,50 0 0 1 1725.5,896" fill="none" stroke="#1e1d1b" stroke-width="2"/><path d="M1497,812 L1497.5,892 L1497.7,893 L1498.1,894 L1498.9,895 L1500,896 L1501.3,897 L1503,897.9 L1504.9,898.8 L1507.1,899.6 L1509.6,900.4 L1512.3,901.2 L1515.2,901.9 L1518.3,902.5 L1521.6,903.1 L1525.1,903.6 L1528.7,904 L1532.4,904.4 L1536.2,904.6 L1540.1,904.8 L1544,905 L1548,905 L1552,905 L1555.9,904.8 L1559.8,904.6 L1563.6,904.4 L1567.3,904 L1570.9,903.6 L1574.4,903.1 L1577.7,902.5 L1580.8,901.9 L1583.7,901.2 L1586.4,900.4 L1588.9,899.6 L1591.1,898.8 L1593,897.9 L1594.7,897 L1596,896 L1597.1,895 L1597.9,894 L1598.3,893 L1598.5,892 L1598,812 Z" fill="url(#gNeck)"/><path d="M1497.5,892 L1497.7,893 L1498.1,894 L1498.9,895 L1500,896 L1501.3,897 L1503,897.9 L1504.9,898.8 L1507.1,899.6 L1509.6,900.4 L1512.3,901.2 L1515.2,901.9 L1518.3,902.5 L1521.6,903.1 L1525.1,903.6 L1528.7,904 L1532.4,904.4 L1536.2,904.6 L1540.1,904.8 L1544,905 L1548,905 L1552,905 L1555.9,904.8 L1559.8,904.6 L1563.6,904.4 L1567.3,904 L1570.9,903.6 L1574.4,903.1 L1577.7,902.5 L1580.8,901.9 L1583.7,901.2 L1586.4,900.4 L1588.9,899.6 L1591.1,898.8 L1593,897.9 L1594.7,897 L1596,896 L1597.1,895 L1597.9,894 L1598.3,893 L1598.5,892" fill="none" stroke="#1e1d1b" stroke-width="2.0"/><path d="M1489,795 L1497,808 L1497,808 L1497.2,808.9 L1497.6,809.7 L1498.4,810.6 L1499.5,811.4 L1500.9,812.2 L1502.6,813 L1504.5,813.7 L1506.7,814.5 L1509.2,815.1 L1511.9,815.8 L1514.9,816.4 L1518,816.9 L1521.4,817.4 L1524.8,817.8 L1528.5,818.2 L1532.2,818.5 L1536.1,818.7 L1540,818.9 L1544,819 L1548,819 L1552,819 L1556,818.9 L1559.9,818.7 L1563.8,818.5 L1567.5,818.2 L1571.2,817.8 L1574.6,817.4 L1578,816.9 L1581.1,816.4 L1584.1,815.8 L1586.8,815.1 L1589.3,814.5 L1591.5,813.7 L1593.4,813 L1595.1,812.2 L1596.5,811.4 L1597.6,810.6 L1598.4,809.7 L1598.8,808.9 L1599,808 L1598,808 L1605,795 Z" fill="url(#gNeck)"/><path d="M1497,808 L1497.2,808.9 L1497.6,809.7 L1498.4,810.6 L1499.5,811.4 L1500.9,812.2 L1502.6,813 L1504.5,813.7 L1506.7,814.5 L1509.2,815.1 L1511.9,815.8 L1514.9,816.4 L1518,816.9 L1521.4,817.4 L1524.8,817.8 L1528.5,818.2 L1532.2,818.5 L1536.1,818.7 L1540,818.9 L1544,819 L1548,819 L1552,819 L1556,818.9 L1559.9,818.7 L1563.8,818.5 L1567.5,818.2 L1571.2,817.8 L1574.6,817.4 L1578,816.9 L1581.1,816.4 L1584.1,815.8 L1586.8,815.1 L1589.3,814.5 L1591.5,813.7 L1593.4,813 L1595.1,812.2 L1596.5,811.4 L1597.6,810.6 L1598.4,809.7 L1598.8,808.9 L1599,808" fill="none" stroke="#1e1d1b" stroke-width="2.0"/><path d="M1497.5,813 L1497.7,813.9 L1498.1,814.7 L1498.9,815.6 L1500,816.4 L1501.3,817.2 L1503,818 L1504.9,818.7 L1507.1,819.5 L1509.6,820.1 L1512.3,820.8 L1515.2,821.4 L1518.3,821.9 L1521.6,822.4 L1525.1,822.8 L1528.7,823.2 L1532.4,823.5 L1536.2,823.7 L1540.1,823.9 L1544,824 L1548,824 L1552,824 L1555.9,823.9 L1559.8,823.7 L1563.6,823.5 L1567.3,823.2 L1570.9,822.8 L1574.4,822.4 L1577.7,821.9 L1580.8,821.4 L1583.7,820.8 L1586.4,820.1 L1588.9,819.5 L1591.1,818.7 L1593,818 L1594.7,817.2 L1596,816.4 L1597.1,815.6 L1597.9,814.7 L1598.3,813.9 L1598.5,813" fill="none" stroke="#1e1d1b" stroke-width="1.6"/><path d="M1415.5,740 L1415.5,762 L1415.9,765 L1417.1,767.9 L1419.2,770.9 L1422,773.7 L1425.6,776.5 L1429.9,779.3 L1435,781.9 L1440.8,784.3 L1447.2,786.7 L1454.3,788.9 L1461.9,790.9 L1470.1,792.7 L1478.8,794.4 L1487.8,795.9 L1497.3,797.1 L1507.1,798.1 L1517.1,799 L1527.3,799.5 L1537.6,799.9 L1548,800 L1558.4,799.9 L1568.7,799.5 L1578.9,799 L1588.9,798.1 L1598.7,797.1 L1608.2,795.9 L1617.2,794.4 L1625.9,792.7 L1634.1,790.9 L1641.7,788.9 L1648.8,786.7 L1655.2,784.3 L1661,781.9 L1666.1,779.3 L1670.4,776.5 L1674,773.7 L1676.8,770.9 L1678.9,767.9 L1680.1,765 L1680.5,762 L1680.5,740 Z" fill="url(#gKnob)"/><path d="M1415.5,762 L1415.9,765 L1417.1,767.9 L1419.2,770.9 L1422,773.7 L1425.6,776.5 L1429.9,779.3 L1435,781.9 L1440.8,784.3 L1447.2,786.7 L1454.3,788.9 L1461.9,790.9 L1470.1,792.7 L1478.8,794.4 L1487.8,795.9 L1497.3,797.1 L1507.1,798.1 L1517.1,799 L1527.3,799.5 L1537.6,799.9 L1548,800 L1558.4,799.9 L1568.7,799.5 L1578.9,799 L1588.9,798.1 L1598.7,797.1 L1608.2,795.9 L1617.2,794.4 L1625.9,792.7 L1634.1,790.9 L1641.7,788.9 L1648.8,786.7 L1655.2,784.3 L1661,781.9 L1666.1,779.3 L1670.4,776.5 L1674,773.7 L1676.8,770.9 L1678.9,767.9 L1680.1,765 L1680.5,762" fill="none" stroke="#1e1d1b" stroke-width="2.0"/><path d="M1421,404 L1418,430 L1415.6,463 L1396,729 L1400,742 L1410.8,747.4 L1427,750 L1439,751.5 L1439,760 L1468,766.5 L1497.6,771 L1503,767.5 L1522,768.5 L1542.7,769 L1542.7,774 L1578,773 L1611.6,770 L1611.6,763 L1638,759.6 L1651,757 L1670,752 L1686,748 L1690,742 L1698,731 L1677,469 L1675,430 L1674,404 Z" fill="url(#gKnob)"/><path d="M1415.6,463 L1429,483.6 L1412,747.6 L1400,742 L1396,729 Z" fill="#6f6e6a" opacity="0.6"/><path d="M1429,483.6 L1443,489 L1427,750 L1412,747.6 Z" fill="#5f5e5a" opacity="0.45"/><path d="M1504,504 L1509.7,502 L1503,767.5 L1497.6,771 Z" fill="#5f5e5a" opacity="0.35"/><path d="M1628.6,497 L1638,496 L1651,757 L1638,759.6 Z" fill="#5a5955" opacity="0.45"/><path d="M1672,482 L1677,469 L1698,731 L1690,742 L1686,748 Z" fill="#5f5e5a" opacity="0.4"/><path d="M1429,483.6 L1412,747.6" fill="none" stroke="#1e1d1b" stroke-width="1.8" stroke-linejoin="round"/><path d="M1429,483.6 L1443,489 L1451,493" fill="none" stroke="#1e1d1b" stroke-width="1.8" stroke-linejoin="round"/><path d="M1443,489 L1427,750" fill="none" stroke="#1e1d1b" stroke-width="1.8" stroke-linejoin="round"/><path d="M1451,493 L1439,760" fill="none" stroke="#1e1d1b" stroke-width="1.8" stroke-linejoin="round"/><path d="M1504,507 L1505,503 L1509.7,501 L1541,502 L1543,506" fill="none" stroke="#1e1d1b" stroke-width="1.8" stroke-linejoin="round"/><path d="M1504,504 L1497.6,771" fill="none" stroke="#1e1d1b" stroke-width="1.8" stroke-linejoin="round"/><path d="M1509.7,502 L1503,767.5" fill="none" stroke="#1e1d1b" stroke-width="1.8" stroke-linejoin="round"/><path d="M1543,504 L1542.7,774" fill="none" stroke="#1e1d1b" stroke-width="1.8" stroke-linejoin="round"/><path d="M1605,502 L1607,498.5 L1636,495.5 L1638,499" fill="none" stroke="#1e1d1b" stroke-width="1.8" stroke-linejoin="round"/><path d="M1605,499 L1611.6,770" fill="none" stroke="#1e1d1b" stroke-width="1.8" stroke-linejoin="round"/><path d="M1628.6,497 L1638,759.6" fill="none" stroke="#1e1d1b" stroke-width="1.8" stroke-linejoin="round"/><path d="M1638,496 L1651,757" fill="none" stroke="#1e1d1b" stroke-width="1.8" stroke-linejoin="round"/><path d="M1672,485 L1675,471 L1677,469" fill="none" stroke="#1e1d1b" stroke-width="1.8" stroke-linejoin="round"/><path d="M1672,482 L1686,748" fill="none" stroke="#1e1d1b" stroke-width="1.8" stroke-linejoin="round"/><path d="M1415.6,463 L1396,729 L1400,742 L1410.8,747.4" fill="none" stroke="#1e1d1b" stroke-width="1.8" stroke-linejoin="round"/><path d="M1677,469 L1698,731 L1690,742" fill="none" stroke="#1e1d1b" stroke-width="1.8" stroke-linejoin="round"/><path d="M1410.8,747.4 L1427,750 L1439,751.5 L1439,760 L1468,766.5 L1497.6,771 L1503,767.5 L1522,768.5 L1542.7,769 L1542.7,774 L1578,773 L1611.6,770 L1611.6,763 L1638,759.6 L1651,757 L1670,752 L1686,748 L1690,742 L1698,731" fill="none" stroke="#1e1d1b" stroke-width="1.8" stroke-linejoin="round"/><ellipse cx="1548" cy="404" rx="126.5" ry="37" fill="#73726e" stroke="#1e1d1b" stroke-width="2.0"/><path d="M1423,401 L1423.4,403.7 L1424.5,406.5 L1426.5,409.2 L1429.1,411.8 L1432.5,414.4 L1436.6,416.9 L1441.4,419.3 L1446.9,421.6 L1452.9,423.7 L1459.6,425.7 L1466.8,427.6 L1474.5,429.3 L1482.7,430.8 L1491.3,432.2 L1500.2,433.3 L1509.4,434.3 L1518.8,435 L1528.4,435.6 L1538.2,435.9 L1548,436 L1557.8,435.9 L1567.6,435.6 L1577.2,435 L1586.6,434.3 L1595.8,433.3 L1604.7,432.2 L1613.3,430.8 L1621.5,429.3 L1629.2,427.6 L1636.4,425.7 L1643.1,423.7 L1649.1,421.6 L1654.6,419.3 L1659.4,416.9 L1663.5,414.4 L1666.9,411.8 L1669.5,409.2 L1671.5,406.5 L1672.6,403.7 L1673,401" fill="none" stroke="#1e1d1b" stroke-width="1.7"/><ellipse cx="1548" cy="399" rx="117" ry="31" fill="#8a8884"/><path d="M1430,399 C1435,383 1463,357 1493,346 A54.5,16 0 0 1 1602,346 C1632,357 1660,383 1665,399 A117,31 0 0 1 1430,399 Z" fill="url(#gDomeR)"/><path d="M1430,399 C1435,383 1463,357 1493,346 A54.5,16 0 0 1 1602,346 C1632,357 1660,383 1665,399 A117,31 0 0 1 1430,399 Z" fill="url(#gDome)" opacity="0.35"/><path d="M1430,399 A117,31 0 0 0 1665,399" fill="none" stroke="#1e1d1b" stroke-width="2.1"/><ellipse cx="1547.5" cy="346" rx="54.5" ry="16" fill="#8d8a84" stroke="#1e1d1b" stroke-width="2.2"/><ellipse cx="1547" cy="344" rx="30.7" ry="10" fill="#8f8b84" stroke="#1e1d1b" stroke-width="1.9"/><ellipse cx="1547" cy="338.5" rx="20.3" ry="5.5" fill="#9a968f" stroke="#1e1d1b" stroke-width="1.9"/><path d="M-2,55 L7,55 L2.5,61 Z" fill="#555"/><path d="M37,48 L54,48 L58,52 L58,69 L37,69 Z" fill="#8f8f8f" /><path d="M41,49 L52,49 L52,56 L41,56 Z" fill="#cfcfcf" /><path d="M42,62 L53,62 L53,69 L42,69 Z" fill="#cfcfcf" /><path d="M44,63 L51,63 L51,68 L44,68 Z" fill="#8f8f8f" /><path d="M105,67 C106,58 101,54 92,54 L92,54" fill="none" stroke="#444" stroke-width="3" /><path d="M86,54 L94,47 L94,61 Z" fill="#444" /><path d="M117,54 L126,54 L121.5,60 Z" fill="#555"/><path d="M146,67 C145,58 150,54 159,54" fill="none" stroke="#8a8a8a" stroke-width="3" /><path d="M165,54 L157,47 L157,61 Z" fill="#8a8a8a" /><path d="M175,54 L184,54 L179.5,60 Z" fill="#8a8a8a"/><circle cx="213.2" cy="58" r="8.2" fill="none" stroke="#4a8ae6" stroke-width="5"/><circle cx="213.2" cy="58" r="10.2" fill="none" stroke="#9cc8f0" stroke-width="1.2"/><path d="M206,52 L212,55 M219,52 L216,58 M214,64 L209,60" stroke="#a8e0fa" stroke-width="1.8"/><circle cx="213.2" cy="58" r="5.8" fill="none" stroke="#b0e4f8" stroke-width="1.4"/><circle cx="213.2" cy="58" r="4.6" fill="#2e2822"/><path d="M33,140 L43,140 L38.0,146 Z" fill="#333"/><path d="M113,162 L140,162 L148,155 L148,165 L140,170 L113,170 Z" fill="#bdbdbd" /><path d="M113,131 L118,123 L148,123 L140,131 Z" fill="#9ccbf5" /><path d="M113,131 L140,131 L140,162 L113,162 Z" fill="#75aee6" /><path d="M140,131 L148,123 L148,155 L140,162 Z" fill="#4f8fd0" /><path d="M154,161 L154,130" fill="none" stroke="#3a3a3a" stroke-width="2" /><path d="M150,132 L154,124 L158,132 Z" fill="#3a3a3a" /><path d="M176,123 L224,123 L224,152 L210,160 L189,160 L176,152 Z" fill="#4f8fd0" /><path d="M176,123 L224,123 L207,147 L192,147 Z" fill="#9ccbf5" /><circle cx="199.5" cy="157" r="12.5" fill="#f2f2f2" stroke="#7a7a7a" stroke-width="1.6"/><path d="M242,136 C242,128 247,124 254,124 L266,124 L266,134 L258,138 L280,138 C284,138 287,141 287,146 L287,160 L276,168 L276,149 L257,149 L257,152 L249,152 C245,152 242,149 242,145 Z" fill="#75aee6" /><path d="M254,124 L266,124 L258,131 Z" fill="#9ccbf5" /><path d="M276,149 L287,141 L287,160 L276,168 Z" fill="#4f8fd0" /><path d="M257.5,149.5 L276,149.5 L276,168.5 L257.5,168.5 Z" fill="#f4f4f4" stroke="#7a7a7a" stroke-width="1.6" /><path d="M312,125 L344,125 M308,129 L308,161 M312,165 L334,165 M348,129 L348,142" fill="none" stroke="#555" stroke-width="1.8" stroke-dasharray="6 2"/><rect x="304.5" y="122.0" width="5" height="5" fill="#444"/><rect x="345.5" y="122.0" width="5" height="5" fill="#444"/><rect x="304.5" y="163.0" width="5" height="5" fill="#444"/><path d="M321,135 L334,135 M318,138 L318,151 M321,153 C328,151 334,145 336,138" fill="none" stroke="#555" stroke-width="1.6" /><rect x="315.8" y="133.3" width="4.5" height="4.5" fill="#444"/><rect x="334.8" y="133.3" width="4.5" height="4.5" fill="#444"/><rect x="315.8" y="152.3" width="4.5" height="4.5" fill="#444"/><path d="M339.5,149 L345.5,149 L345.5,157 L353.5,157 L353.5,163 L345.5,163 L345.5,171 L339.5,171 L339.5,163 L331.5,163 L331.5,157 L339.5,157 Z" fill="#3fae4a" /><path d="M369,147 C380,135 405,135 417,147 L417,158 L408,165 C400,155 385,155 377,165 L369,158 Z" fill="#75aee6" /><path d="M369,147 C380,135 405,135 417,147 L408,151 C400,143 385,143 377,151 Z" fill="#9ccbf5" /><path d="M407,151 L417,146 L417,158 L407,165 Z" fill="#f4f4f4" stroke="#666" stroke-width="1.2" /><path d="M414,134 C404,124 384,123 374,131" fill="none" stroke="#444" stroke-width="1.6" /><path d="M370,134 L372,126 L378,131 Z" fill="#222" /><path d="M434,134 L446,123 L482,123 L469,134 Z" fill="#efefef" stroke="#6e6e6e" stroke-width="1.8" /><path d="M469,134 L482,123 L482,158 L469,170 Z" fill="#c9c9c9" stroke="#6e6e6e" stroke-width="1.8" /><path d="M434,134 L469,134 L469,170 L434,170 Z" fill="#dedede" stroke="#6e6e6e" stroke-width="1.8" /><circle cx="452" cy="152.5" r="11.5" fill="#75aee6" stroke="#7a7a7a" stroke-width="1.4"/><path d="M455,141.5 C462,143 464,150 462,156 C458,150 456,145 455,141.5 Z" fill="#f4f4f4" /><rect x="499" y="126" width="9.5" height="9.5" fill="#f4f4f4" stroke="#555" stroke-width="1.6"/><rect x="530" y="126" width="10" height="10" fill="#5a9ee0"/><rect x="499" y="157" width="10" height="10" fill="#5a9ee0"/><rect x="530" y="157" width="10" height="10" fill="#5a9ee0"/><path d="M510,131 L530,131 M510,162 L530,162 M504,137 L504,157" fill="none" stroke="#555" stroke-width="1.6" /><path d="M563,142 C563,131 569,126 578,126 L590,126 L605,136 L608,158 C608,166 602,170 594,170 L576,170 C568,170 563,165 563,157 Z" fill="#9b7be0" stroke="#8a6ad4" stroke-width="1.2" /><path d="M567,144 L598,144 L598,168 L576,168 C570,168 567,164 567,158 Z" fill="#a98cef" /><path d="M582,134 L582,169 M564,152 L606,152" fill="none" stroke="#7f62c4" stroke-width="1.2" /><path d="M598,146 L607,141 L607,160 L598,168 Z" fill="#7a5ac8" /><path d="M597.5,123.5 L599.0,130.2 L604.3,125.7 L601.5,132.1 L608.4,131.4 L602.5,135.0 L608.4,138.6 L601.5,137.9 L604.3,144.3 L599.0,139.8 L597.5,146.5 L596.0,139.8 L590.7,144.3 L593.5,137.9 L586.6,138.6 L592.5,135.0 L586.6,131.4 L593.5,132.1 L590.7,125.7 L596.0,130.2 Z" fill="#f2a82a"/><path d="M644,135 L655,123 L673,123 C684,127 691,136 692,146 L692,158 L680,170 L644,170 Z" fill="#dedede" stroke="#6e6e6e" stroke-width="1.8" /><path d="M644,135 L655,123 L673,123 L662,135 Z" fill="#f4f4f4" /><path d="M680,170 L680,154 L691,144 L691,158 Z" fill="#c4c4c4" /><path d="M663,132 L673,124 C684,128 691,136 692,146 L681,153 C680,142 673,134 663,132 Z" fill="#64a4e3" stroke="#e8f2fb" stroke-width="1" /><path d="M709,135 L720,123 L735,123 L756,144 L756,158 L745,170 L709,170 Z" fill="#dedede" stroke="#6e6e6e" stroke-width="1.8" /><path d="M709,135 L720,123 L733,123 L722,135 Z" fill="#f4f4f4" /><path d="M745,170 L745,154 L756,144 L756,158 Z" fill="#c4c4c4" /><path d="M725,132 L735,123 L756,144 L746,153 Z" fill="#64a4e3" stroke="#e8f2fb" stroke-width="1" /><path d="M773,135 L785,123 L821,123 L821,158 L809,170 L773,170 Z" fill="#dedede" stroke="#6e6e6e" stroke-width="1.8" /><path d="M773,135 L785,123 L821,123 L809,135 Z" fill="#f4f4f4" /><path d="M809,135 L821,123 L821,158 L809,170 Z" fill="#c4c4c4" /><path d="M779,141 L803,141 L803,164 L779,164 Z" fill="#f4f4f4" /><path d="M779,141 L791,141 L791,151 L803,151 L803,164 L779,164 Z" fill="#8cc0f0" /><path d="M779,141 L791,141 L791,151 L779,164 Z" fill="#4f8fd0" /><path d="M839,137 L850,126 L862,126 L876,155 L870,166 L839,166 Z" fill="#dedede" stroke="#6e6e6e" stroke-width="1.8" /><path d="M839,137 L850,126 L860,126 L849,137 Z" fill="#f4f4f4" /><path d="M853,134 L862,126 L879,159 L870,166 Z" fill="#64a4e3" stroke="#e8f2fb" stroke-width="1" /><path d="M883,162 L869,131" fill="none" stroke="#3a3a3a" stroke-width="1.6" /><path d="M865,126 L874,132 L866,136 Z" fill="#3a3a3a" /><path d="M902,145 L908,139 L918,139 L918,128 L924,123 L950,123 L950,153 L944,159 L935,159 L935,164 L929,170 L902,170 Z" fill="#75aee6" /><path d="M918,139 L918,128 L924,123 L950,123 L944,129 L924,129 L924,139 Z" fill="#9ccbf5" /><path d="M902,145 L908,139 L924,139 L918,145 Z" fill="#9ccbf5" /><path d="M944,129 L950,123 L950,153 L944,159 Z" fill="#4f8fd0" /><path d="M929,159 L935,159 L935,164 L929,170 Z" fill="#4f8fd0" /><path d="M967,153 L1014,153 L1014,163 L1008,169 L967,169 Z" fill="#dedede" stroke="#6e6e6e" stroke-width="1.8" /><path d="M1008,153 L1014,153 L1014,163 L1008,169 Z" fill="#c4c4c4" /><path d="M967,131 L974,123 L1011,123 L1004,131 Z" fill="#9ccbf5" /><path d="M967,131 L1004,131 L1004,146 L967,146 Z" fill="#75aee6" /><path d="M1004,131 L1011,123 L1011,140 L1004,146 Z" fill="#4f8fd0" /><path d="M967,150 L1008,150 L1014,144" fill="none" stroke="#6aa8e6" stroke-width="2.2" /><path d="M1033,170 L1033,131 L1041,123 L1047,123 L1047,170 Z" fill="#dedede" stroke="#6e6e6e" stroke-width="1.6" /><path d="M1043,131 L1051,123 L1065,123 L1065,162 L1057,170 L1043,170 Z" fill="#75aee6" /><path d="M1057,131 L1065,123 L1065,162 L1057,170 Z" fill="#4f8fd0" /><path d="M1066,146.5 L1073,146.5" fill="none" stroke="#3a3a3a" stroke-width="1.6" /><path d="M1071,142 L1077,146.5 L1071,151 Z" fill="#3a3a3a" /><path d="M1119,127 L1119,166 M1099,146.5 L1139,146.5" fill="none" stroke="#2e2e2e" stroke-width="2.6" /><path d="M1119,123 L1126,134 L1112,134 Z M1119,170 L1126,159 L1112,159 Z M1096,146.5 L1107,139 L1107,154 Z M1143,146.5 L1132,139 L1132,154 Z" fill="#2e2e2e" /><path d="M1162,166 C1165,171 1172,169 1174,160 L1181,131 C1183,124 1188,121 1192,126" fill="none" stroke="#555" stroke-width="2.6" /><path d="M1169,136 L1190,136" fill="none" stroke="#555" stroke-width="2.2" /><path d="M1186,147 C1189,139 1194,140 1196,149 L1198,157 C1200,164 1204,164 1206,158" fill="none" stroke="#555" stroke-width="2.4" /><path d="M1207,146 C1205,139 1200,140 1197,148 L1194,157 C1192,164 1187,164 1185,159" fill="none" stroke="#555" stroke-width="2.4" /><path d="M1267,152 L1308,152 L1308,164 L1302,170 L1267,170 Z" fill="#dedede" stroke="#6e6e6e" stroke-width="1.6" /><path d="M1286,152 L1286,170" fill="none" stroke="#6e6e6e" stroke-width="1.4" /><path d="M1302,170 L1302,157 L1308,152 L1308,164 Z" fill="#c4c4c4" /><path d="M1267,134 L1273,128 L1290,128 L1290,146 L1286,152 L1267,152 Z" fill="#75aee6" /><path d="M1267,134 L1273,128 L1290,128 L1286,134 Z" fill="#9ccbf5" /><path d="M1286,134 L1290,128 L1290,146 L1286,152 Z" fill="#4f8fd0" /><path d="M1301.5,123.0 L1303.0,130.2 L1308.6,125.3 L1305.5,132.1 L1312.9,131.3 L1306.5,135.0 L1312.9,138.7 L1305.5,137.9 L1308.6,144.7 L1303.0,139.8 L1301.5,147.0 L1300.0,139.8 L1294.4,144.7 L1297.5,137.9 L1290.1,138.7 L1296.5,135.0 L1290.1,131.3 L1297.5,132.1 L1294.4,125.3 L1300.0,130.2 Z" fill="#f2a82a"/><path d="M1409,168 L1409,136 L1422,123 L1433,123" fill="none" stroke="#6e6e6e" stroke-width="1.8" /><path d="M1410,137 L1422,137 L1422,167 L1410,167 Z" fill="#d6d6d6" /><path d="M1410,137 L1422,124 L1433,124 L1422,137 Z" fill="#f4f4f4" /><path d="M1409,167.5 L1421,167.5" fill="none" stroke="#6e6e6e" stroke-width="1.8" /><path d="M1423,136 L1435,124 L1435,156 L1423,168 Z" fill="#6cc47c" /><path d="M1441,136 L1454,124 L1454,155 L1441,167 Z" fill="#e8995a" /><path d="M1544.5,134 L1544.5,148 M1585.5,134 L1585.5,148 M1548,141 L1582,141" fill="none" stroke="#666" stroke-width="1.8" /><path d="M1546,141 L1552,137 L1552,145 Z M1584,141 L1578,137 L1578,145 Z" fill="#666" /><rect x="1544" y="149.5" width="41.5" height="8.5" fill="#f0a838"/><rect x="1546.0" y="150" width="1.5" height="2.5" fill="#8a5a00"/><rect x="1550.5" y="150" width="1.5" height="3.5" fill="#8a5a00"/><rect x="1555.0" y="150" width="1.5" height="2.5" fill="#8a5a00"/><rect x="1559.5" y="150" width="1.5" height="3.5" fill="#8a5a00"/><rect x="1564.0" y="150" width="1.5" height="2.5" fill="#8a5a00"/><rect x="1568.5" y="150" width="1.5" height="3.5" fill="#8a5a00"/><rect x="1573.0" y="150" width="1.5" height="2.5" fill="#8a5a00"/><rect x="1577.5" y="150" width="1.5" height="3.5" fill="#8a5a00"/><rect x="1582.0" y="150" width="1.5" height="2.5" fill="#8a5a00"/><path d="M1649,136 L1659,126 L1688,126 L1688,156 L1678,166 L1649,166 Z" fill="#dedede" stroke="#6e6e6e" stroke-width="1.8" /><path d="M1649,136 L1659,126 L1688,126 L1678,136 Z" fill="#f6f6f6" /><path d="M1678,136 L1688,126 L1688,156 L1678,166 Z" fill="#c4c4c4" /><path d="M1644,159 C1647,152 1652,149 1659,149 L1659,143 L1667,151 L1659,158 L1659,153 C1653,153 1648,155 1644,159 Z" fill="#3a3d42" /><rect x="1707.5" y="124" width="44" height="43.5" fill="#8ec4f5"/><path d="M1707.5,150 C1712,142 1718,142 1722,146 C1728,151 1732,157 1738,153 C1742,150 1747,150 1751.5,156 L1751.5,167.5 L1707.5,167.5 Z" fill="#4f8fcc" /><circle cx="1739" cy="135.5" r="4.5" fill="#fdf8c0"/><path d="M1780.5,123 L1802,123 L1818,138 L1818,169.5 L1780.5,169.5 Z" fill="#f6f6f6" stroke="#6e6e6e" stroke-width="1.5" /><path d="M1803,123 L1818,138 L1803,138 Z" fill="#e8a838" /><rect x="1780" y="150.5" width="38.5" height="19.5" fill="#e8a838"/><text x="1794" y="168" font-family="Liberation Sans" font-weight="bold" font-size="16" fill="#fff8e0" textLength="23.5" lengthAdjust="spacingAndGlyphs">SVG</text><circle cx="1787" cy="160" r="5" fill="none" stroke="#3a2a10" stroke-width="2" stroke-dasharray="2 1.5"/><path d="M1770,134 L1786,134 L1786,129 L1797,137 L1786,145 L1786,140 L1770,140 Z" fill="#3b86e0" /><path d="M1844.5,123 L1867,123 L1882.5,138 L1882.5,170 L1844.5,170 Z" fill="#f6f6f6" stroke="#6e6e6e" stroke-width="1.5" /><path d="M1867,123 L1882.5,138 L1867,138 Z" fill="#666" /><path d="M1835,134 L1851,134 L1851,129 L1862,137 L1851,145 L1851,140 L1835,140 Z" fill="#3b86e0" /><rect x="1926.5" y="118" width="57" height="56.5" fill="#3c8fd3"/><rect x="1931" y="123" width="42" height="33" fill="none" stroke="#5aa87a" stroke-width="1.2" stroke-dasharray="3 2"/><path d="M1963,144 L1963,165 L1967.5,160.5 L1971,168 L1974,166.5 L1970.5,159.5 L1976,159 Z" fill="#fff" stroke="#222" stroke-width="1.2" /><path d="M386,186 L394,186 L390.0,191 Z" fill="#333"/><path d="M950,186 L958,186 L954.0,191 Z" fill="#333"/><path d="M1333,186 L1341,186 L1337.0,191 Z" fill="#333"/><path d="M1475.5,186 L1483.5,186 L1479.5,191 Z" fill="#333"/><path d="M1592,186 L1600,186 L1596.0,191 Z" fill="#333"/><path d="M1785,186 L1793,186 L1789.0,191 Z" fill="#333"/><path d="M1981,186 L1989,186 L1985.0,191 Z" fill="#333"/><path d="M1761,53 L1766,49 L1786,49 L1786,66 L1781,72 L1761,72 Z" fill="#7a7a7a" /><path d="M1761,53 L1781,53 L1781,72 L1761,72 Z" fill="#a5a5a5" /><path d="M1781,53 L1786,49 L1786,66 L1781,72 Z" fill="#5e5e5e" /><path d="M9,264 L13,260 L31,260 L31,278 L27,282 L9,282 Z" fill="#f2f2f2" stroke="#555" stroke-width="1.6" /><path d="M27,264 L31,260 L31,278 L27,282 Z" fill="#c8c8c8" stroke="#555" stroke-width="1.2" /><path d="M9,264 L27,264" fill="none" stroke="#555" stroke-width="1.2" /><circle cx="183.5" cy="272" r="8.5" fill="none" stroke="#333" stroke-width="2"/><circle cx="183.5" cy="272" r="3.5" fill="#222"/><path d="M19.9,308.1 L19.5,310.2 L16.2,310.9 L15.3,312.2 L16.0,315.5 L14.2,316.7 L11.4,314.9 L9.8,315.2 L7.9,317.9 L5.8,317.5 L5.1,314.2 L3.8,313.3 L0.5,314.0 L-0.7,312.2 L1.1,309.4 L0.8,307.8 L-1.9,305.9 L-1.5,303.8 L1.8,303.1 L2.7,301.8 L2.0,298.5 L3.8,297.3 L6.6,299.1 L8.2,298.8 L10.1,296.1 L12.2,296.5 L12.9,299.8 L14.2,300.7 L17.5,300.0 L18.7,301.8 L16.9,304.6 L17.2,306.2 Z" fill="#8c8c8c"/><circle cx="9" cy="307" r="3.8" fill="#f0f0f0"/><path d="M-2,334 L7,334 L9,337 L22,337 L22,353 L-2,353 Z" fill="#8c8c8c"/><rect x="-2" y="338" width="24" height="1.5" fill="#f0f0f0"/><path d="M-1,379.5 C4,372.5 16,372.5 21,379.5 C16,386.5 4,386.5 -1,379.5 Z" fill="none" stroke="#bdbdbd" stroke-width="2.2"/><path d="M2,371.5 L18,387.5" stroke="#bdbdbd" stroke-width="2"/><path d="M35,370 L44,370 L46,373 L59,373 L59,389 L35,389 Z" fill="#8c8c8c"/><rect x="35" y="374" width="24" height="1.5" fill="#f0f0f0"/><path d="M-2,415.5 C4,407.5 16,407.5 22,415.5 C16,423.5 4,423.5 -2,415.5 Z" fill="#8c8c8c"/><circle cx="10" cy="415.5" r="4" fill="#e8e8e8"/><circle cx="10" cy="415.5" r="2" fill="#8c8c8c"/><path d="M35,406 L44,406 L46,409 L59,409 L59,425 L35,425 Z" fill="#8c8c8c"/><rect x="35" y="410" width="24" height="1.5" fill="#f0f0f0"/><path d="M-1,451.5 C4,444.5 16,444.5 21,451.5 C16,458.5 4,458.5 -1,451.5 Z" fill="none" stroke="#bdbdbd" stroke-width="2.2"/><path d="M2,443.5 L18,459.5" stroke="#bdbdbd" stroke-width="2"/><path d="M35,442 L44,442 L46,445 L59,445 L59,461 L35,461 Z" fill="#8c8c8c"/><rect x="35" y="446" width="24" height="1.5" fill="#f0f0f0"/><path d="M-1,487.5 C4,480.5 16,480.5 21,487.5 C16,494.5 4,494.5 -1,487.5 Z" fill="none" stroke="#bdbdbd" stroke-width="2.2"/><path d="M2,479.5 L18,495.5" stroke="#bdbdbd" stroke-width="2"/><path d="M35,478 L44,478 L46,481 L59,481 L59,497 L35,497 Z" fill="#8c8c8c"/><rect x="35" y="482" width="24" height="1.5" fill="#f0f0f0"/><path d="M-2,523.5 C4,515.5 16,515.5 22,523.5 C16,531.5 4,531.5 -2,523.5 Z" fill="#8c8c8c"/><circle cx="10" cy="523.5" r="4" fill="#e8e8e8"/><circle cx="10" cy="523.5" r="2" fill="#8c8c8c"/><path d="M35,514 L44,514 L46,517 L59,517 L59,533 L35,533 Z" fill="#8c8c8c"/><rect x="35" y="518" width="24" height="1.5" fill="#f0f0f0"/><path d="M-6,2053 L15,2064 L-6,2075 Z" fill="#3c3c3c" /><rect x="33" y="2059" width="3" height="9" fill="#3c3c3c"/><path d="M38,2055 L52,2064 L38,2074 Z" fill="#3c3c3c" /><path d="M72,2054 L86,2064 L72,2075 Z" fill="#3c3c3c" /><rect x="87.5" y="2054" width="3.5" height="21" fill="#3c3c3c"/><rect x="136" y="2086" width="722" height="3" fill="#c8c8c8"/><rect x="135.75" y="2079" width="2.5" height="9" fill="#c8c8c8"/><rect x="126" y="2052" width="21" height="21" fill="#5b9bd8"/><path d="M126,2066 C132,2060 140,2068 147,2063 L147,2073 L126,2073 Z" fill="#3f7fc0" /><rect x="127" y="2053" width="19" height="10" fill="#8ec4f5"/><circle cx="141" cy="2058" r="3" fill="#fdf8c0"/><rect x="171.75" y="2079" width="2.5" height="9" fill="#c8c8c8"/><path d="M162,2071 L162,2052 L182,2052 M162,2071 L172,2071 L172,2071" fill="none" stroke="#555" stroke-width="1.5" stroke-dasharray="3 1.5"/><path d="M182,2052 L182,2061" fill="none" stroke="#555" stroke-width="1.5" /><rect x="160.3" y="2050.3" width="3.5" height="3.5" fill="#3f7fc0"/><rect x="180.3" y="2050.3" width="3.5" height="3.5" fill="#3f7fc0"/><rect x="160.3" y="2069.3" width="3.5" height="3.5" fill="#3f7fc0"/><path d="M174,2072 L183,2062 L186,2065 L177,2074 Z" fill="#f2b84a" /><path d="M183,2062 L186,2065 L185,2061 Z" fill="#e05050" /><rect x="207.25" y="2079" width="2.5" height="9" fill="#c8c8c8"/><path d="M197.5,2064 C203.5,2057 215.5,2057 222.5,2064 L222.5,2071 L216.5,2074 C212.5,2068 206.5,2068 202.5,2074 L197.5,2071 Z" fill="#6aa8e6" /><path d="M200.5,2058 C205.5,2052 215.5,2052 220.5,2057" fill="none" stroke="#444" stroke-width="1.4" /><rect x="217.5" y="2065" width="4" height="7" fill="#f2f2f2" stroke="#555" stroke-width="1"/><rect x="243.75" y="2079" width="2.5" height="9" fill="#c8c8c8"/><path d="M234,2064 C240,2057 252,2057 259,2064 L259,2071 L253,2074 C249,2068 243,2068 239,2074 L234,2071 Z" fill="#6aa8e6" /><path d="M237,2058 C242,2052 252,2052 257,2057" fill="none" stroke="#444" stroke-width="1.4" /><rect x="254" y="2065" width="4" height="7" fill="#f2f2f2" stroke="#555" stroke-width="1"/><rect x="279.25" y="2079" width="2.5" height="9" fill="#c8c8c8"/><circle cx="272.5" cy="2058" r="3" fill="none" stroke="#777" stroke-width="1.3"/><circle cx="279.5" cy="2054" r="3.4" fill="#6aa3dc"/><circle cx="287.5" cy="2058" r="3.4" fill="#6aa3dc"/><circle cx="272.5" cy="2067" r="3.4" fill="#6aa3dc"/><circle cx="287.5" cy="2067" r="3.4" fill="#6aa3dc"/><circle cx="279.5" cy="2071" r="3.4" fill="#6aa3dc"/><rect x="315.75" y="2079" width="2.5" height="9" fill="#c8c8c8"/><path d="M306,2070 L322,2070 L326,2067 L326,2071 L322,2074 L306,2074 Z" fill="#bdbdbd" /><path d="M306,2055 L309,2052 L326,2052 L326,2067 L322,2070 L306,2070 Z" fill="#75aee6" /><path d="M322,2055 L326,2052 L326,2067 L322,2070 Z" fill="#4f8fd0" /><path d="M330,2070 L330,2055" fill="none" stroke="#222" stroke-width="1.6" /><path d="M327,2057 L330,2052 L333,2057 Z" fill="#222" /><rect x="350.75" y="2079" width="2.5" height="9" fill="#c8c8c8"/><path d="M351,2055 L351,2073 L342,2073 Z" fill="none" stroke="#555" stroke-width="1.5" /><path d="M354,2055 L363,2073 L354,2073 Z" fill="#6aa3dc" /><rect x="387.75" y="2079" width="2.5" height="9" fill="#c8c8c8"/><path d="M378,2062 L382,2059 L388,2059 L388,2054 L392,2051 L402,2051 L402,2064 L393,2068 L393,2074 L378,2074 Z" fill="#75aee6" /><rect x="423.75" y="2079" width="2.5" height="9" fill="#c8c8c8"/><rect x="415" y="2052" width="10" height="11" rx="4" fill="#f2f2f2" stroke="#555" stroke-width="1.4"/><rect x="426" y="2062" width="10" height="11" rx="4" fill="#f2f2f2" stroke="#555" stroke-width="1.4"/><path d="M419,2064 L419,2070 L424,2070" fill="none" stroke="#3f7fc0" stroke-width="1.6" /><rect x="458.75" y="2079" width="2.5" height="9" fill="#c8c8c8"/><path d="M460,2053 L460,2074 M449,2063.5 L471,2063.5" fill="none" stroke="#222" stroke-width="1.8" /><path d="M460,2051 L464,2057 L456,2057 Z M460,2076 L464,2070 L456,2070 Z M448,2063.5 L454,2059.5 L454,2067.5 Z M472,2063.5 L466,2059.5 L466,2067.5 Z" fill="#222" /><rect x="495.25" y="2079" width="2.5" height="9" fill="#c8c8c8"/><path d="M486.5,2074 L486.5,2066 L493.5,2064" fill="none" stroke="#666" stroke-width="1.5" /><path d="M497.5,2052 L509.5,2064 L497.5,2076 L485.5,2064 Z" fill="#d08a4e" /><rect x="494.5" y="2061" width="6" height="6" fill="#8cd49a" stroke="#e8f4e8" stroke-width="1"/><rect x="531.75" y="2079" width="2.5" height="9" fill="#c8c8c8"/><path d="M522,2071 L522,2052 L542,2052 M522,2071 L532,2071 L532,2071" fill="none" stroke="#555" stroke-width="1.5" stroke-dasharray="3 1.5"/><path d="M542,2052 L542,2061" fill="none" stroke="#555" stroke-width="1.5" /><rect x="520.3" y="2050.3" width="3.5" height="3.5" fill="#3f7fc0"/><rect x="540.3" y="2050.3" width="3.5" height="3.5" fill="#3f7fc0"/><rect x="520.3" y="2069.3" width="3.5" height="3.5" fill="#3f7fc0"/><path d="M534,2072 L543,2062 L546,2065 L537,2074 Z" fill="#f2b84a" /><path d="M543,2062 L546,2065 L545,2061 Z" fill="#e05050" /><rect x="567.75" y="2079" width="2.5" height="9" fill="#c8c8c8"/><path d="M558,2070 L574,2070 L578,2067 L578,2071 L574,2074 L558,2074 Z" fill="#bdbdbd" /><path d="M558,2055 L561,2052 L578,2052 L578,2067 L574,2070 L558,2070 Z" fill="#75aee6" /><path d="M574,2055 L578,2052 L578,2067 L574,2070 Z" fill="#4f8fd0" /><path d="M582,2070 L582,2055" fill="none" stroke="#222" stroke-width="1.6" /><path d="M579,2057 L582,2052 L585,2057 Z" fill="#222" /><rect x="603.75" y="2079" width="2.5" height="9" fill="#c8c8c8"/><circle cx="597" cy="2058" r="3" fill="none" stroke="#777" stroke-width="1.3"/><circle cx="604" cy="2054" r="3.4" fill="#6aa3dc"/><circle cx="612" cy="2058" r="3.4" fill="#6aa3dc"/><circle cx="597" cy="2067" r="3.4" fill="#6aa3dc"/><circle cx="612" cy="2067" r="3.4" fill="#6aa3dc"/><circle cx="604" cy="2071" r="3.4" fill="#6aa3dc"/><rect x="639.75" y="2079" width="2.5" height="9" fill="#c8c8c8"/><path d="M631,2074 L631,2058 L636,2053 L640,2053" fill="none" stroke="#777" stroke-width="1.5" /><path d="M638,2059 L643,2053 L643,2069 L638,2074 Z" fill="#6cc47c" /><path d="M647,2060 L653,2053 L653,2068 L647,2074 Z" fill="#e8995a" /><rect x="675.75" y="2079" width="2.5" height="9" fill="#c8c8c8"/><path d="M666,2071 L666,2052 L686,2052 M666,2071 L676,2071 L676,2071" fill="none" stroke="#555" stroke-width="1.5" stroke-dasharray="3 1.5"/><path d="M686,2052 L686,2061" fill="none" stroke="#555" stroke-width="1.5" /><rect x="664.3" y="2050.3" width="3.5" height="3.5" fill="#3f7fc0"/><rect x="684.3" y="2050.3" width="3.5" height="3.5" fill="#3f7fc0"/><rect x="664.3" y="2069.3" width="3.5" height="3.5" fill="#3f7fc0"/><path d="M678,2072 L687,2062 L690,2065 L681,2074 Z" fill="#f2b84a" /><path d="M687,2062 L690,2065 L689,2061 Z" fill="#e05050" /><rect x="711.75" y="2079" width="2.5" height="9" fill="#c8c8c8"/><path d="M703,2074 L703,2066 L710,2064" fill="none" stroke="#666" stroke-width="1.5" /><path d="M714,2052 L726,2064 L714,2076 L702,2064 Z" fill="#d08a4e" /><rect x="711" y="2061" width="6" height="6" fill="#8cd49a" stroke="#e8f4e8" stroke-width="1"/><rect x="747.75" y="2079" width="2.5" height="9" fill="#c8c8c8"/><path d="M738,2071 L738,2052 L758,2052 M738,2071 L748,2071 L748,2071" fill="none" stroke="#555" stroke-width="1.5" stroke-dasharray="3 1.5"/><path d="M758,2052 L758,2061" fill="none" stroke="#555" stroke-width="1.5" /><rect x="736.3" y="2050.3" width="3.5" height="3.5" fill="#3f7fc0"/><rect x="756.3" y="2050.3" width="3.5" height="3.5" fill="#3f7fc0"/><rect x="736.3" y="2069.3" width="3.5" height="3.5" fill="#3f7fc0"/><path d="M750,2072 L759,2062 L762,2065 L753,2074 Z" fill="#f2b84a" /><path d="M759,2062 L762,2065 L761,2061 Z" fill="#e05050" /><rect x="783.75" y="2079" width="2.5" height="9" fill="#c8c8c8"/><path d="M774,2064 C780,2057 792,2057 799,2064 L799,2071 L793,2074 C789,2068 783,2068 779,2074 L774,2071 Z" fill="#6aa8e6" /><path d="M777,2058 C782,2052 792,2052 797,2057" fill="none" stroke="#444" stroke-width="1.4" /><rect x="794" y="2065" width="4" height="7" fill="#f2f2f2" stroke="#555" stroke-width="1"/><rect x="819.75" y="2079" width="2.5" height="9" fill="#c8c8c8"/><path d="M811,2074 L811,2058 L817,2053 C828,2053 834,2059 834,2065 L834,2069 L830,2074 Z" fill="#d8d8d8" stroke="#777" stroke-width="1.4" /><path d="M824,2053 C830,2054 834,2059 834,2065" fill="none" stroke="#5b9bd8" stroke-width="3" /><rect x="854.75" y="2079" width="2.5" height="9" fill="#c8c8c8"/><circle cx="848" cy="2058" r="3" fill="none" stroke="#777" stroke-width="1.3"/><circle cx="855" cy="2054" r="3.4" fill="#6aa3dc"/><circle cx="863" cy="2058" r="3.4" fill="#6aa3dc"/><circle cx="848" cy="2067" r="3.4" fill="#6aa3dc"/><circle cx="863" cy="2067" r="3.4" fill="#6aa3dc"/><circle cx="855" cy="2071" r="3.4" fill="#6aa3dc"/><path d="M866,2041 L884,2041 L884,2046 L877,2053 L873,2053 L866,2046 Z" fill="#555" /><rect x="873.5" y="2050" width="3.5" height="40" fill="#555"/><path d="M1664,2012 L1664,1993 M1659,1996 L1664,1988 L1669,1996" fill="none" stroke="#444" stroke-width="1.6" /><ellipse cx="1665" cy="2001" rx="11" ry="4" fill="none" stroke="#444" stroke-width="1.6"/><path d="M1652,2004 L1658,2000 L1658,2007 Z" fill="#444" /><path d="M1684,1997 L1693,1997 L1688.5,2003 Z" fill="#444"/><path d="M1703,1998 L1726,1998 L1726,2011 L1703,2011 Z" fill="#f4f4f4" stroke="#444" stroke-width="1.6" /><rect x="1707" y="2001" width="15" height="6" fill="#aab4c4" stroke="#555" stroke-width="1"/><path d="M1705,1998 L1707,1989 L1713,1994 L1720,1990 L1722,1998 Z" fill="#444" /><path d="M1745,2013 C1741,2008 1739,2003 1741,2000 C1743,1999 1745,2002 1746,2004 L1746,1991 C1746,1989 1749,1989 1749,1991 L1749,2000 L1749,1989 C1749,1987 1752,1987 1752,1989 L1752,2000 L1752,1990 C1752,1988 1755,1988 1755,1990 L1755,2000 L1755,1992 C1755,1990 1758,1990 1758,1992 L1758,2006 C1758,2010 1756,2013 1753,2013 Z" fill="#f4f4f4" stroke="#444" stroke-width="1.4" /><circle cx="1788" cy="2000" r="7" fill="#e8f0f4" stroke="#444" stroke-width="1.8"/><path d="M1793,2005 L1799,2011" fill="none" stroke="#444" stroke-width="3" /><path d="M1799,1991 L1805,1991 M1802,1988 L1802,1994 M1799,1997 L1805,1997" fill="none" stroke="#444" stroke-width="1.3" /><circle cx="1828" cy="1999" r="8.5" fill="none" stroke="#444" stroke-width="1.8"/><rect x="1823.5" y="1994.5" width="9" height="9" fill="none" stroke="#444" stroke-width="1.4"/><path d="M1834,2005 L1841,2012" fill="none" stroke="#444" stroke-width="3" /><path d="M1850,1997 L1859,1997 L1854.5,2003 Z" fill="#444"/><rect x="1869.5" y="1989" width="22" height="17" fill="#9fbfe0" stroke="#555" stroke-width="1.8"/><rect x="1876" y="2007" width="9" height="4" fill="#555"/><path d="M1896,1997 L1905,1997 L1900.5,2003 Z" fill="#444"/><rect x="1916" y="1989" width="22" height="22" fill="#e4e4e4" stroke="#555" stroke-width="1.5"/><path d="M1920.4,1989 L1920.4,2011 M1924.8,1989 L1924.8,2011 M1929.2,1989 L1929.2,2011 M1933.6,1989 L1933.6,2011 M1916,1993.4 L1938,1993.4 M1916,1997.8 L1938,1997.8 M1916,2002.2 L1938,2002.2 M1916,2006.6 L1938,2006.6 " fill="none" stroke="#777" stroke-width="1" /><path d="M1942,1997 L1951,1997 L1946.5,2003 Z" fill="#444"/><rect x="1962" y="1990" width="22" height="20" fill="#4a78b8" rx="1"/><rect x="1964" y="1992" width="8" height="7" fill="#a8c4e8"/><rect x="1974" y="1992" width="8" height="7" fill="#a8c4e8"/><rect x="1964" y="2001" width="8" height="7" fill="#a8c4e8"/><rect x="1974" y="2001" width="8" height="7" fill="#a8c4e8"/><path d="M1989,1997 L1998,1997 L1993.5,2003 Z" fill="#444"/></svg></body></html>
